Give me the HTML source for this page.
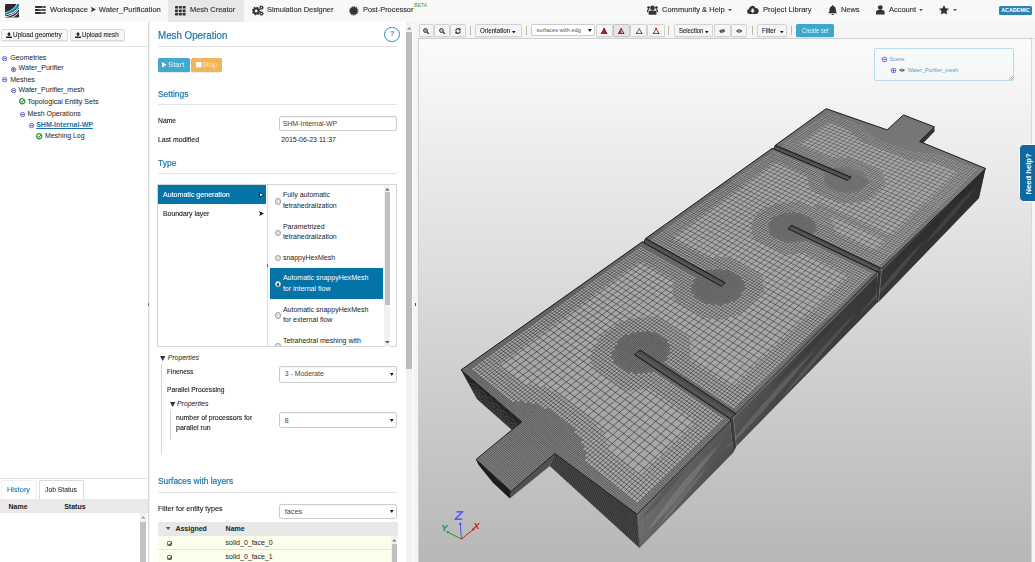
<!DOCTYPE html><html><head><meta charset="utf-8"><title>Mesh Creator</title><style>
html,body{margin:0;padding:0}body{width:1035px;height:562px;overflow:hidden;position:relative;background:#fff;font-family:"Liberation Sans",sans-serif;}
body>div,body>span,body>svg{position:absolute;display:block}svg{overflow:visible}
</style></head><body>
<div style="left:0.00px;top:0.00px;width:1035.00px;height:21.60px;background:#f8f8f8;border-bottom:1px solid #dedede;"></div>
<div style="left:168.20px;top:0.00px;width:75.40px;height:21.50px;background:#e7e7e7;"></div>
<svg style="left:5.10px;top:3.60px;" width="14.00" height="13.50" viewBox="0 0 14 13.5"><rect x="0" y="0" width="14" height="13.5" rx="1.2" fill="#2a2a2c"/>
<path d="M0 8.4 C5 7.2 9.4 4.2 11.6 0 L14 0 L14 3.4 C11 8.2 5.6 10.6 0 11.4 Z" fill="#fff"/>
<path d="M0 8.9 C5.2 7.8 10 4.6 12.4 0 L14 0 L14 2.6 C10.8 7.6 5.4 10 0 10.9 Z" fill="#1b7fbd"/>
<path d="M0 12.3 C6 11.4 11 8.6 14 4.4 L14 5.4 C11.2 9.4 6.4 12 1.4 13 L0 13 Z" fill="#fff"/>
<path d="M4.6 13.5 C8.6 12.4 11.8 10.4 14 7.4 L14 8.4 C12.2 10.8 10 12.4 7.4 13.5 Z" fill="#e8e8e8"/></svg>
<svg style="left:35.30px;top:5.60px;" width="10.60" height="8.00" viewBox="0 0 10.6 8"><g fill="#2e2e2e"><rect x="0" y="0" width="10.6" height="2.1" rx=".4"/><rect x="0" y="2.95" width="10.6" height="2.1" rx=".4"/><rect x="0" y="5.9" width="10.6" height="2.1" rx=".4"/></g>
<g fill="#bbb"><rect x="6.4" y=".65" width="3" height=".8"/><rect x="4.4" y="3.6" width="5" height=".8"/><rect x="5.6" y="6.55" width="3.8" height=".8"/></g></svg>
<span style="left:49.60px;top:5.14px;font-size:8.09px;line-height:10.52px;color:#333;white-space:nowrap;transform:scaleX(0.944);transform-origin:0 50%;-webkit-text-stroke:0.15px #333;">Workspace ➤ Water_Purification</span>
<svg style="left:175.30px;top:5.50px;" width="10.60" height="9.60" viewBox="0 0 10.6 9.6"><g fill="#333"><rect x="0.0" y="0.0" width="3" height="2.6" rx=".4"/><rect x="3.8" y="0.0" width="3" height="2.6" rx=".4"/><rect x="7.6" y="0.0" width="3" height="2.6" rx=".4"/><rect x="0.0" y="3.4" width="3" height="2.6" rx=".4"/><rect x="3.8" y="3.4" width="3" height="2.6" rx=".4"/><rect x="7.6" y="3.4" width="3" height="2.6" rx=".4"/><rect x="0.0" y="6.8" width="3" height="2.6" rx=".4"/><rect x="3.8" y="6.8" width="3" height="2.6" rx=".4"/><rect x="7.6" y="6.8" width="3" height="2.6" rx=".4"/></g></svg>
<span style="left:190.30px;top:5.14px;font-size:8.09px;line-height:10.52px;color:#333;white-space:nowrap;transform:scaleX(0.924);transform-origin:0 50%;-webkit-text-stroke:0.15px #333;">Mesh Creator</span>
<svg style="left:252.00px;top:5.00px;" width="11.50" height="10.80" viewBox="0 0 11.5 10.8"><g fill="none" stroke="#333"><circle cx="4.2" cy="6" r="2.4" stroke-width="2"/><circle cx="4.2" cy="6" r="3.7" stroke-width="1.3" stroke-dasharray="1.5 1.4"/>
<circle cx="9.4" cy="2.6" r="1.2" stroke-width="1.1"/><circle cx="9.4" cy="2.6" r="2" stroke-width=".8" stroke-dasharray=".9 .9"/>
<circle cx="9.4" cy="8.6" r="1.2" stroke-width="1.1"/><circle cx="9.4" cy="8.6" r="2" stroke-width=".8" stroke-dasharray=".9 .9"/></g></svg>
<span style="left:266.80px;top:5.14px;font-size:8.09px;line-height:10.52px;color:#333;white-space:nowrap;transform:scaleX(0.919);transform-origin:0 50%;-webkit-text-stroke:0.15px #333;">Simulation Designer</span>
<svg style="left:349.20px;top:5.60px;" width="9.60" height="9.60" viewBox="0 0 9.6 9.6"><circle cx="4.8" cy="4.8" r="3.9" fill="#333"/><circle cx="4.8" cy="4.8" r="4.3" fill="none" stroke="#333" stroke-width="1" stroke-dasharray="1.2 1"/></svg>
<span style="left:362.50px;top:5.14px;font-size:8.09px;line-height:10.52px;color:#333;white-space:nowrap;transform:scaleX(0.913);transform-origin:0 50%;-webkit-text-stroke:0.15px #333;">Post-Processor</span>
<span style="left:414.30px;top:1.95px;font-size:5.00px;line-height:6.51px;color:#3c9a3c;white-space:nowrap;">BETA</span>
<svg style="left:646.60px;top:5.00px;" width="11.00" height="9.80" viewBox="0 0 11 9.8"><g fill="#333"><circle cx="5.5" cy="2.9" r="2.3"/><path d="M1.6 9.8 L1.6 7.4 Q1.6 5.4 3.6 5.4 L7.4 5.4 Q9.4 5.4 9.4 7.4 L9.4 9.8 Z"/>
<circle cx="1.6" cy="2.6" r="1.4"/><circle cx="9.4" cy="2.6" r="1.4"/><path d="M0 7.2 L0 5.6 Q0 4.2 1.4 4.2 L2.6 4.4 Q1 5.4 1.2 7.2Z"/><path d="M11 7.2 L11 5.6 Q11 4.2 9.6 4.2 L8.4 4.4 Q10 5.4 9.8 7.2Z"/></g></svg>
<span style="left:661.60px;top:5.14px;font-size:8.09px;line-height:10.52px;color:#333;white-space:nowrap;transform:scaleX(0.931);transform-origin:0 50%;-webkit-text-stroke:0.15px #333;">Community &amp; Help</span>
<svg style="left:727.60px;top:9.40px;" width="4.00" height="2.40" viewBox="0 0 4 2.4"><path d="M0 0 L4 0 L2 2.2Z" fill="#555"/></svg>
<svg style="left:747.40px;top:5.20px;" width="11.20" height="9.00" viewBox="0 0 11.2 9"><path d="M2.6 9 A2.6 2.6 0 0 1 1.9 3.9 A3.4 3.4 0 0 1 8.4 2.9 A3 3 0 0 1 8.8 9 Z" fill="#333"/><path d="M4.7 3.6 L6.5 3.6 L6.5 5.6 L8 5.6 L5.6 8 L3.2 5.6 L4.7 5.6Z" fill="#f8f8f8"/></svg>
<span style="left:762.70px;top:5.14px;font-size:8.09px;line-height:10.52px;color:#333;white-space:nowrap;transform:scaleX(0.934);transform-origin:0 50%;-webkit-text-stroke:0.15px #333;">Project Library</span>
<svg style="left:827.80px;top:4.80px;" width="9.40" height="10.20" viewBox="0 0 9.4 10.2"><path d="M4.7 0.2 C5.3 0.2 5.5 .7 5.4 1.1 C7.4 1.7 7.9 3.4 7.9 5 C7.9 6.8 8.6 7.6 9.4 8.3 L0 8.3 C.8 7.6 1.5 6.8 1.5 5 C1.5 3.4 2 1.7 4 1.1 C3.9 .7 4.1 .2 4.7 .2Z M3.5 8.9 L5.9 8.9 A1.2 1.2 0 0 1 3.5 8.9Z" fill="#333"/></svg>
<span style="left:841.40px;top:5.14px;font-size:8.09px;line-height:10.52px;color:#333;white-space:nowrap;transform:scaleX(0.915);transform-origin:0 50%;-webkit-text-stroke:0.15px #333;">News</span>
<svg style="left:876.00px;top:5.20px;" width="8.60" height="9.40" viewBox="0 0 8.6 9.4"><circle cx="4.3" cy="2.6" r="2.4" fill="#333"/><path d="M0 9.4 L0 7.6 Q0 5 2.4 5 L6.2 5 Q8.6 5 8.6 7.6 L8.6 9.4Z" fill="#333"/></svg>
<span style="left:888.50px;top:5.14px;font-size:8.09px;line-height:10.52px;color:#333;white-space:nowrap;transform:scaleX(0.924);transform-origin:0 50%;-webkit-text-stroke:0.15px #333;">Account</span>
<svg style="left:918.80px;top:9.40px;" width="4.00" height="2.40" viewBox="0 0 4 2.4"><path d="M0 0 L4 0 L2 2.2Z" fill="#555"/></svg>
<svg style="left:938.60px;top:4.90px;" width="10.00" height="9.60" viewBox="0 0 10 9.6"><path d="M5 0 L6.5 3.2 L10 3.7 L7.5 6.1 L8.1 9.6 L5 7.9 L1.9 9.6 L2.5 6.1 L0 3.7 L3.5 3.2Z" fill="#333"/></svg>
<svg style="left:952.60px;top:9.40px;" width="4.00" height="2.40" viewBox="0 0 4 2.4"><path d="M0 0 L4 0 L2 2.2Z" fill="#555"/></svg>
<div style="left:999.00px;top:5.80px;width:33.00px;height:8.80px;background:#2c83b4;border-radius:1.5px;"></div>
<span style="left:1001.20px;top:6.83px;font-size:5.34px;line-height:6.95px;color:#fff;white-space:nowrap;font-weight:bold;">ACADEMIC</span>
<div style="left:0.00px;top:22.00px;width:148.00px;height:540.00px;background:#fff;"></div>
<div style="left:148.00px;top:22.00px;width:1.00px;height:540.00px;background:#d9d9d9;"></div>
<div style="left:149.00px;top:22.00px;width:1.20px;height:540.00px;background:#f3f3f3;"></div>
<div style="left:0.60px;top:28.50px;width:67.00px;height:12.80px;background:#f7f7f7;border:1px solid #d8d8d8;border-radius:1.6px;box-sizing:border-box;box-shadow:0 .6px .6px rgba(0,0,0,.12);"></div>
<div style="left:69.60px;top:28.50px;width:55.00px;height:12.80px;background:#f7f7f7;border:1px solid #d8d8d8;border-radius:1.6px;box-sizing:border-box;box-shadow:0 .6px .6px rgba(0,0,0,.12);"></div>
<svg style="left:6.00px;top:31.70px;" width="6.00" height="6.00" viewBox="0 0 6 6"><path d="M3 0 L5.2 2.4 L3.8 2.4 L3.8 4 L2.2 4 L2.2 2.4 L.8 2.4Z M0 4.4 L6 4.4 L6 6 L0 6Z" fill="#222"/></svg>
<span style="left:13.20px;top:30.25px;font-size:7.00px;line-height:9.10px;color:#222;white-space:nowrap;transform:scaleX(0.915);transform-origin:0 50%;-webkit-text-stroke:0.1px #222;">Upload geometry</span>
<svg style="left:75.30px;top:31.70px;" width="6.00" height="6.00" viewBox="0 0 6 6"><path d="M3 0 L5.2 2.4 L3.8 2.4 L3.8 4 L2.2 4 L2.2 2.4 L.8 2.4Z M0 4.4 L6 4.4 L6 6 L0 6Z" fill="#222"/></svg>
<span style="left:82.40px;top:30.25px;font-size:7.00px;line-height:9.10px;color:#222;white-space:nowrap;transform:scaleX(0.887);transform-origin:0 50%;-webkit-text-stroke:0.1px #222;">Upload mesh</span>
<div style="left:0.00px;top:46.00px;width:148.00px;height:1.00px;background:#e2e2e2;"></div>
<svg style="left:2.40px;top:55.80px;" width="5.20" height="5.20" viewBox="0 0 5.2 5.2"><circle cx="2.6" cy="2.6" r="2.2" fill="#eef" stroke="#3a3ac0" stroke-width=".7"/><path d="M1.2 2.6 L4 2.6" stroke="#3a3ac0" stroke-width=".8"/></svg>
<span style="left:10.20px;top:53.05px;font-size:7.00px;line-height:9.10px;color:#222;white-space:nowrap;">Geometries</span>
<svg style="left:11.20px;top:66.60px;" width="5.20" height="5.20" viewBox="0 0 5.2 5.2"><circle cx="2.6" cy="2.6" r="2.2" fill="#eef" stroke="#3a3ac0" stroke-width=".7"/><path d="M1.2 2.6 L4 2.6 M2.6 1.2 L2.6 4" stroke="#3a3ac0" stroke-width=".8"/></svg>
<span style="left:18.60px;top:63.79px;font-size:7.10px;line-height:9.23px;color:#222;white-space:nowrap;">Water_Purifier</span>
<svg style="left:2.40px;top:77.40px;" width="5.20" height="5.20" viewBox="0 0 5.2 5.2"><circle cx="2.6" cy="2.6" r="2.2" fill="#eef" stroke="#3a3ac0" stroke-width=".7"/><path d="M1.2 2.6 L4 2.6" stroke="#3a3ac0" stroke-width=".8"/></svg>
<span style="left:10.20px;top:74.61px;font-size:7.05px;line-height:9.17px;color:#222;white-space:nowrap;">Meshes</span>
<svg style="left:11.20px;top:88.10px;" width="5.20" height="5.20" viewBox="0 0 5.2 5.2"><circle cx="2.6" cy="2.6" r="2.2" fill="#eef" stroke="#3a3ac0" stroke-width=".7"/><path d="M1.2 2.6 L4 2.6" stroke="#3a3ac0" stroke-width=".8"/></svg>
<span style="left:18.60px;top:85.31px;font-size:7.05px;line-height:9.17px;color:#222;white-space:nowrap;">Water_Purifier_mesh</span>
<svg style="left:19.20px;top:98.40px;" width="6.40" height="6.40" viewBox="0 0 6.4 6.4"><circle cx="3.2" cy="3.2" r="2.6" fill="#fff" stroke="#1f9a2f" stroke-width="1.2"/><path d="M1.7 3.2 L2.9 4.4 L4.8 2.1" stroke="#1f7a25" stroke-width="1" fill="none"/></svg>
<span style="left:27.40px;top:97.11px;font-size:7.07px;line-height:9.19px;color:#222;white-space:nowrap;">Topological Entity Sets</span>
<svg style="left:20.00px;top:111.60px;" width="5.20" height="5.20" viewBox="0 0 5.2 5.2"><circle cx="2.6" cy="2.6" r="2.2" fill="#eef" stroke="#3a3ac0" stroke-width=".7"/><path d="M1.2 2.6 L4 2.6" stroke="#3a3ac0" stroke-width=".8"/></svg>
<span style="left:27.40px;top:109.03px;font-size:7.03px;line-height:9.13px;color:#222;white-space:nowrap;">Mesh Operations</span>
<svg style="left:28.60px;top:122.70px;" width="5.20" height="5.20" viewBox="0 0 5.2 5.2"><circle cx="2.6" cy="2.6" r="2.2" fill="#eef" stroke="#3a3ac0" stroke-width=".7"/><path d="M1.2 2.6 L4 2.6" stroke="#3a3ac0" stroke-width=".8"/></svg>
<span style="left:36.20px;top:120.05px;font-size:7.00px;line-height:9.10px;color:#1673ad;white-space:nowrap;font-weight:bold;text-decoration:underline;">SHM-Internal-WP</span>
<svg style="left:36.40px;top:133.10px;" width="6.40" height="6.40" viewBox="0 0 6.4 6.4"><circle cx="3.2" cy="3.2" r="2.6" fill="#fff" stroke="#1f9a2f" stroke-width="1.2"/><path d="M1.7 3.2 L2.9 4.4 L4.8 2.1" stroke="#1f7a25" stroke-width="1" fill="none"/></svg>
<span style="left:45.00px;top:131.90px;font-size:6.92px;line-height:8.99px;color:#222;white-space:nowrap;">Meshing Log</span>
<div style="left:0.00px;top:477.80px;width:148.00px;height:1.00px;background:#e2e2e2;"></div>
<div style="left:0.60px;top:479.50px;width:36.00px;height:19.50px;border:1px solid #efefef;border-bottom:none;box-sizing:border-box;border-radius:2px 2px 0 0;"></div>
<div style="left:38.50px;top:479.50px;width:45.00px;height:19.50px;border:1px solid #dcdcdc;border-bottom:none;box-sizing:border-box;border-radius:2px 2px 0 0;background:#fff;"></div>
<span style="left:6.90px;top:485.09px;font-size:7.55px;line-height:9.81px;color:#1b7bb3;white-space:nowrap;transform:scaleX(0.983);transform-origin:0 50%;-webkit-text-stroke:0.1px #1b7bb3;">History</span>
<span style="left:45.00px;top:485.09px;font-size:7.55px;line-height:9.81px;color:#333;white-space:nowrap;transform:scaleX(0.897);transform-origin:0 50%;-webkit-text-stroke:0.1px #333;">Job Status</span>
<div style="left:0.00px;top:498.80px;width:148.00px;height:14.20px;background:#e9e9e9;"></div>
<span style="left:8.50px;top:501.85px;font-size:7.00px;line-height:9.10px;color:#222;white-space:nowrap;font-weight:bold;">Name</span>
<span style="left:64.20px;top:501.85px;font-size:7.00px;line-height:9.10px;color:#222;white-space:nowrap;font-weight:bold;">Status</span>
<div style="left:139.80px;top:513.00px;width:6.20px;height:49.00px;background:#f1f1f1;"></div>
<svg style="left:140.60px;top:516.40px;" width="4.60" height="2.60" viewBox="0 0 4.6 2.6"><path d="M0 2.6 L2.3 0 L4.6 2.6Z" fill="#a0a0a0"/></svg>
<div style="left:140.20px;top:521.60px;width:5.40px;height:41.00px;background:#c1c1c1;"></div>
<div style="left:150.20px;top:22.00px;width:255.50px;height:540.00px;background:#fff;"></div>
<span style="left:157.50px;top:28.54px;font-size:10.24px;line-height:13.31px;color:#1a76ab;white-space:nowrap;transform:scaleX(0.954);transform-origin:0 50%;-webkit-text-stroke:0.2px #1a76ab;">Mesh Operation</span>
<div style="left:157.50px;top:45.70px;width:239.90px;height:1.00px;background:#e3e3e3;"></div>
<div style="left:384.30px;top:26.70px;width:15.40px;height:15.40px;border:1px solid #2a8fbd;border-radius:50%;box-sizing:border-box;background:#fff;"></div>
<span style="left:389.90px;top:30.03px;font-size:6.88px;line-height:8.94px;color:#2a8fbd;white-space:nowrap;font-weight:bold;">?</span>
<div style="left:157.50px;top:57.60px;width:32.00px;height:14.00px;background:#41a9cd;border-radius:1.6px;box-shadow:0 .6px .5px rgba(0,0,0,.2);"></div>
<svg style="left:162.20px;top:61.70px;" width="4.60" height="5.60" viewBox="0 0 4.6 5.6"><path d="M0 0 L4.6 2.8 L0 5.6Z" fill="#fff"/></svg>
<span style="left:167.80px;top:59.69px;font-size:7.55px;line-height:9.81px;color:#e6f4fa;white-space:nowrap;transform:scaleX(1.029);transform-origin:0 50%;">Start</span>
<div style="left:190.70px;top:57.60px;width:31.30px;height:14.00px;background:#f4b45a;border-radius:1.6px;box-shadow:0 .6px .5px rgba(0,0,0,.15);"></div>
<svg style="left:195.60px;top:61.80px;" width="5.40" height="5.40" viewBox="0 0 5.4 5.4"><rect width="5.4" height="5.4" fill="#fff"/></svg>
<span style="left:202.00px;top:59.69px;font-size:7.55px;line-height:9.81px;color:#fce5c2;white-space:nowrap;transform:scaleX(0.966);transform-origin:0 50%;">Stop</span>
<span style="left:157.50px;top:88.70px;font-size:8.62px;line-height:11.21px;color:#1a76ab;white-space:nowrap;transform:scaleX(0.979);transform-origin:0 50%;-webkit-text-stroke:0.2px #1a76ab;">Settings</span>
<div style="left:157.50px;top:103.60px;width:239.90px;height:1.00px;background:#e3e3e3;"></div>
<span style="left:157.50px;top:116.49px;font-size:7.55px;line-height:9.81px;color:#222;white-space:nowrap;transform:scaleX(0.899);transform-origin:0 50%;-webkit-text-stroke:0.12px #222;">Name</span>
<div style="left:278.60px;top:116.30px;width:118.90px;height:15.10px;border:1px solid #ccc;border-radius:2px;box-sizing:border-box;background:#fff;box-shadow:inset 0 .5px .5px rgba(0,0,0,.08);"></div>
<span style="left:282.70px;top:119.48px;font-size:6.96px;line-height:9.04px;color:#444;white-space:nowrap;">SHM-Internal-WP</span>
<span style="left:157.50px;top:134.79px;font-size:7.55px;line-height:9.81px;color:#222;white-space:nowrap;transform:scaleX(0.913);transform-origin:0 50%;-webkit-text-stroke:0.12px #222;">Last modified</span>
<span style="left:281.20px;top:134.95px;font-size:7.01px;line-height:9.11px;color:#222;white-space:nowrap;">2015-06-23 11:37</span>
<span style="left:157.50px;top:157.60px;font-size:8.62px;line-height:11.21px;color:#1a76ab;white-space:nowrap;transform:scaleX(0.985);transform-origin:0 50%;-webkit-text-stroke:0.2px #1a76ab;">Type</span>
<div style="left:157.50px;top:172.90px;width:239.90px;height:1.00px;background:#e3e3e3;"></div>
<div style="left:157.20px;top:184.40px;width:239.60px;height:162.60px;border:1px solid #d4d4d4;box-sizing:border-box;background:#fff;"></div>
<div style="left:266.50px;top:185.00px;width:1.00px;height:161.50px;background:#dcdcdc;"></div>
<div style="left:157.80px;top:185.00px;width:108.40px;height:18.90px;background:#0473a8;"></div>
<span style="left:162.50px;top:189.79px;font-size:7.55px;line-height:9.81px;color:#fff;white-space:nowrap;transform:scaleX(0.936);transform-origin:0 50%;-webkit-text-stroke:0.12px #fff;">Automatic generation</span>
<svg style="left:258.80px;top:191.80px;" width="5.40" height="5.60" viewBox="0 0 5.4 5.6"><path d="M.5 .5 L4.9 2.8 L.5 5.1Z" fill="#fff" stroke="#111" stroke-width=".8"/></svg>
<span style="left:162.50px;top:208.99px;font-size:7.55px;line-height:9.81px;color:#222;white-space:nowrap;transform:scaleX(0.912);transform-origin:0 50%;-webkit-text-stroke:0.12px #222;">Boundary layer</span>
<svg style="left:259.00px;top:211.40px;" width="5.00" height="5.00" viewBox="0 0 5 5"><path d="M0 0 L5 2.5 L0 5 L1.2 2.5Z" fill="#111"/></svg>
<div style="left:269.80px;top:267.70px;width:113.40px;height:31.10px;background:#0473a8;"></div>
<div style="left:274.90px;top:198.20px;width:6.40px;height:6.40px;border-radius:50%;background:#e4e4e4;border:.8px solid #a0a0a0;box-sizing:border-box;"></div>
<span style="left:282.90px;top:190.43px;font-size:7.03px;line-height:9.14px;color:#222;white-space:nowrap;">Fully automatic</span>
<span style="left:282.90px;top:200.83px;font-size:7.03px;line-height:9.14px;color:#222;white-space:nowrap;">tetrahedralization</span>
<div style="left:274.90px;top:229.50px;width:6.40px;height:6.40px;border-radius:50%;background:#e4e4e4;border:.8px solid #a0a0a0;box-sizing:border-box;"></div>
<span style="left:282.90px;top:221.73px;font-size:7.03px;line-height:9.14px;color:#222;white-space:nowrap;">Parametrized</span>
<span style="left:282.90px;top:232.23px;font-size:7.03px;line-height:9.14px;color:#222;white-space:nowrap;">tetrahedralization</span>
<div style="left:274.90px;top:255.00px;width:6.40px;height:6.40px;border-radius:50%;background:#e4e4e4;border:.8px solid #a0a0a0;box-sizing:border-box;"></div>
<span style="left:282.90px;top:252.93px;font-size:7.03px;line-height:9.14px;color:#222;white-space:nowrap;">snappyHexMesh</span>
<div style="left:274.90px;top:281.10px;width:6.40px;height:6.40px;border-radius:50%;background:#fff;border:.6px solid #bbb;box-sizing:border-box;"></div>
<div style="left:276.90px;top:283.00px;width:2.60px;height:2.60px;border-radius:50%;background:#333;"></div>
<span style="left:282.90px;top:273.03px;font-size:7.03px;line-height:9.14px;color:#fff;white-space:nowrap;">Automatic snappyHexMesh</span>
<span style="left:282.90px;top:283.93px;font-size:7.03px;line-height:9.14px;color:#fff;white-space:nowrap;">for internal flow</span>
<div style="left:274.90px;top:312.40px;width:6.40px;height:6.40px;border-radius:50%;background:#e4e4e4;border:.8px solid #a0a0a0;box-sizing:border-box;"></div>
<span style="left:282.90px;top:304.63px;font-size:7.03px;line-height:9.14px;color:#222;white-space:nowrap;">Automatic snappyHexMesh</span>
<span style="left:282.90px;top:315.03px;font-size:7.03px;line-height:9.14px;color:#222;white-space:nowrap;">for external flow</span>
<div style="left:275.30px;top:343.00px;width:5.80px;height:3.40px;border-radius:3px 3px 0 0;background:#e9e9e9;border:.7px solid #a9a9a9;border-bottom:none;box-sizing:border-box;"></div>
<span style="left:282.90px;top:335.53px;font-size:7.03px;line-height:9.14px;color:#222;white-space:nowrap;">Tetrahedral meshing with</span>
<div style="left:384.20px;top:185.00px;width:6.20px;height:161.50px;background:#f1f1f1;"></div>
<svg style="left:385.00px;top:187.80px;" width="4.60" height="2.60" viewBox="0 0 4.6 2.6"><path d="M0 2.6 L2.3 0 L4.6 2.6Z" fill="#606060"/></svg>
<div style="left:384.60px;top:192.30px;width:5.40px;height:113.20px;background:#c1c1c1;"></div>
<svg style="left:385.00px;top:341.20px;" width="4.60" height="2.60" viewBox="0 0 4.6 2.6"><path d="M0 0 L2.3 2.6 L4.6 0Z" fill="#505050"/></svg>
<div style="left:266.50px;top:264.20px;width:1.00px;height:3.00px;background:#666;"></div>
<svg style="left:159.80px;top:355.70px;" width="5.40" height="5.00" viewBox="0 0 5.4 5"><path d="M0 0 L5.4 0 L2.7 5Z" fill="#333"/></svg>
<span style="left:167.80px;top:353.66px;font-size:6.82px;line-height:8.87px;color:#222;white-space:nowrap;font-style:italic;">Properties</span>
<div style="left:161.10px;top:363.70px;width:1.00px;height:91.30px;background:#d6d6d6;"></div>
<span style="left:166.90px;top:367.09px;font-size:7.55px;line-height:9.81px;color:#222;white-space:nowrap;transform:scaleX(0.858);transform-origin:0 50%;-webkit-text-stroke:0.12px #222;">Fineness</span>
<span style="left:166.90px;top:385.49px;font-size:7.55px;line-height:9.81px;color:#222;white-space:nowrap;transform:scaleX(0.890);transform-origin:0 50%;-webkit-text-stroke:0.12px #222;">Parallel Processing</span>
<svg style="left:169.60px;top:401.60px;" width="5.40" height="5.00" viewBox="0 0 5.4 5"><path d="M0 0 L5.4 0 L2.7 5Z" fill="#333"/></svg>
<span style="left:177.00px;top:399.52px;font-size:6.89px;line-height:8.96px;color:#222;white-space:nowrap;font-style:italic;">Properties</span>
<div style="left:170.30px;top:410.00px;width:1.00px;height:30.20px;background:#d6d6d6;"></div>
<span style="left:175.80px;top:412.69px;font-size:7.55px;line-height:9.81px;color:#222;white-space:nowrap;transform:scaleX(0.908);transform-origin:0 50%;-webkit-text-stroke:0.12px #222;">number of processors for</span>
<span style="left:175.80px;top:423.39px;font-size:7.55px;line-height:9.81px;color:#222;white-space:nowrap;transform:scaleX(0.929);transform-origin:0 50%;-webkit-text-stroke:0.12px #222;">parallel run</span>
<div style="left:278.50px;top:366.00px;width:118.80px;height:16.70px;border:1px solid #ccc;border-radius:2.2px;box-sizing:border-box;background:#fff;box-shadow:inset 0 .5px .5px rgba(0,0,0,.06);"></div>
<span style="left:284.80px;top:370.27px;font-size:6.90px;line-height:8.97px;color:#444;white-space:nowrap;">3 - Moderate</span>
<svg style="left:389.90px;top:372.95px;" width="3.60" height="3.00" viewBox="0 0 3.6 3"><path d="M0 0 L3.6 0 L1.8 3Z" fill="#111"/></svg>
<div style="left:278.50px;top:412.00px;width:118.80px;height:16.40px;border:1px solid #ccc;border-radius:2.2px;box-sizing:border-box;background:#fff;box-shadow:inset 0 .5px .5px rgba(0,0,0,.06);"></div>
<span style="left:284.80px;top:416.04px;font-size:7.01px;line-height:9.12px;color:#444;white-space:nowrap;">8</span>
<svg style="left:389.90px;top:418.80px;" width="3.60" height="3.00" viewBox="0 0 3.6 3"><path d="M0 0 L3.6 0 L1.8 3Z" fill="#111"/></svg>
<span style="left:157.50px;top:475.60px;font-size:8.62px;line-height:11.21px;color:#1a76ab;white-space:nowrap;transform:scaleX(0.975);transform-origin:0 50%;-webkit-text-stroke:0.2px #1a76ab;">Surfaces with layers</span>
<div style="left:157.50px;top:492.10px;width:239.90px;height:1.00px;background:#e3e3e3;"></div>
<span style="left:157.50px;top:503.89px;font-size:7.55px;line-height:9.81px;color:#222;white-space:nowrap;transform:scaleX(0.949);transform-origin:0 50%;-webkit-text-stroke:0.12px #222;">Filter for entity types</span>
<div style="left:278.50px;top:503.50px;width:118.80px;height:15.90px;border:1px solid #ccc;border-radius:2.2px;box-sizing:border-box;background:#fff;box-shadow:inset 0 .5px .5px rgba(0,0,0,.06);"></div>
<span style="left:284.80px;top:507.17px;font-size:7.20px;line-height:9.36px;color:#444;white-space:nowrap;">faces</span>
<svg style="left:389.90px;top:510.05px;" width="3.60" height="3.00" viewBox="0 0 3.6 3"><path d="M0 0 L3.6 0 L1.8 3Z" fill="#111"/></svg>
<div style="left:157.50px;top:522.10px;width:240.20px;height:13.80px;background:#e8e8e8;border-radius:2px 2px 0 0;"></div>
<svg style="left:166.40px;top:527.20px;" width="4.40" height="3.00" viewBox="0 0 4.4 3"><path d="M0 0 L4.4 0 L2.2 3Z" fill="#555"/></svg>
<span style="left:175.40px;top:524.15px;font-size:7.00px;line-height:9.10px;color:#222;white-space:nowrap;font-weight:bold;">Assigned</span>
<span style="left:225.60px;top:524.15px;font-size:7.00px;line-height:9.10px;color:#222;white-space:nowrap;font-weight:bold;">Name</span>
<div style="left:157.50px;top:535.90px;width:233.40px;height:13.40px;background:#fdfdec;"></div>
<div style="left:157.50px;top:549.30px;width:233.40px;height:0.60px;background:#e6e6d8;"></div>
<div style="left:157.50px;top:549.90px;width:233.40px;height:12.10px;background:#fdfdec;"></div>
<div style="left:166.80px;top:541.10px;width:5.40px;height:5.40px;border:.7px solid #777;border-radius:1px;box-sizing:border-box;background:#f4f4f4;"></div>
<svg style="left:167.60px;top:541.60px;" width="4.00" height="4.00" viewBox="0 0 4 4"><path d="M.5 2.1 L1.6 3.3 L3.6 .5" stroke="#111" stroke-width="1" fill="none"/></svg>
<span style="left:225.60px;top:538.05px;font-size:7.00px;line-height:9.10px;color:#222;white-space:nowrap;">solid_0_face_0</span>
<div style="left:166.80px;top:555.00px;width:5.40px;height:5.40px;border:.7px solid #777;border-radius:1px;box-sizing:border-box;background:#f4f4f4;"></div>
<svg style="left:167.60px;top:555.50px;" width="4.00" height="4.00" viewBox="0 0 4 4"><path d="M.5 2.1 L1.6 3.3 L3.6 .5" stroke="#111" stroke-width="1" fill="none"/></svg>
<span style="left:225.60px;top:551.75px;font-size:7.00px;line-height:9.10px;color:#222;white-space:nowrap;">solid_0_face_1</span>
<div style="left:391.00px;top:535.90px;width:6.40px;height:26.10px;background:#f1f1f1;"></div>
<svg style="left:391.90px;top:538.80px;" width="4.60" height="2.60" viewBox="0 0 4.6 2.6"><path d="M0 2.6 L2.3 0 L4.6 2.6Z" fill="#808080"/></svg>
<div style="left:391.50px;top:543.80px;width:5.40px;height:19.00px;background:#c1c1c1;"></div>
<div style="left:405.70px;top:22.00px;width:6.80px;height:540.00px;background:#f1f1f1;"></div>
<svg style="left:406.80px;top:27.40px;" width="4.60" height="2.60" viewBox="0 0 4.6 2.6"><path d="M0 2.6 L2.3 0 L4.6 2.6Z" fill="#909090"/></svg>
<div style="left:406.30px;top:32.00px;width:5.70px;height:337.30px;background:#bcbcbc;"></div>
<div style="left:412.50px;top:22.00px;width:5.50px;height:540.00px;background:#f4f4f4;"></div>
<div style="left:414.60px;top:303.40px;width:0.90px;height:3.00px;background:#555;"></div>
<div style="left:147.60px;top:303.40px;width:0.90px;height:3.00px;background:#777;"></div>
<div style="left:418.00px;top:22.00px;width:617.00px;height:540.00px;background:#f5f5f5;"></div>
<div style="left:418.60px;top:24.40px;width:15.80px;height:12.30px;background:#f5f5f5;border:1px solid #d2d2d2;box-sizing:border-box;border-radius:1.5px;box-shadow:0 .6px .5px rgba(0,0,0,.1);"></div>
<div style="left:434.30px;top:24.40px;width:16.20px;height:12.30px;background:#f5f5f5;border:1px solid #d2d2d2;box-sizing:border-box;border-radius:1.5px;box-shadow:0 .6px .5px rgba(0,0,0,.1);"></div>
<div style="left:450.40px;top:24.40px;width:16.00px;height:12.30px;background:#f5f5f5;border:1px solid #d2d2d2;box-sizing:border-box;border-radius:1.5px;box-shadow:0 .6px .5px rgba(0,0,0,.1);"></div>
<svg style="left:423.20px;top:27.60px;" width="6.00" height="6.00" viewBox="0 0 6 6"><circle cx="2.5" cy="2.5" r="1.9" fill="none" stroke="#222" stroke-width="1"/><path d="M3.9 3.9 L5.8 5.8" stroke="#222" stroke-width="1.2"/><path d="M1.5 2.5 L3.5 2.5 M2.5 1.5 L2.5 3.5" stroke="#222" stroke-width=".5"/></svg>
<svg style="left:439.20px;top:27.60px;" width="6.00" height="6.00" viewBox="0 0 6 6"><circle cx="2.5" cy="2.5" r="1.9" fill="none" stroke="#222" stroke-width="1"/><path d="M3.9 3.9 L5.8 5.8" stroke="#222" stroke-width="1.2"/><path d="M1.5 2.5 L3.5 2.5" stroke="#222" stroke-width=".5"/></svg>
<svg style="left:455.30px;top:27.50px;" width="6.00" height="6.00" viewBox="0 0 6 6"><path d="M.7 2.6 A2.4 2.4 0 0 1 5 1.6 M5.3 3.4 A2.4 2.4 0 0 1 1 4.4" fill="none" stroke="#222" stroke-width="1.1"/><path d="M5.6 .3 L5.6 2.4 L3.6 2.4Z M.4 5.7 L.4 3.6 L2.4 3.6Z" fill="#222"/></svg>
<div style="left:470.10px;top:26.00px;width:1.00px;height:8.60px;background:#c9b79a;"></div>
<div style="left:475.00px;top:24.40px;width:46.60px;height:12.30px;background:#f5f5f5;border:1px solid #d2d2d2;box-sizing:border-box;border-radius:1.5px;box-shadow:0 .6px .5px rgba(0,0,0,.1);"></div>
<span style="left:480.40px;top:26.69px;font-size:6.47px;line-height:8.41px;color:#222;white-space:nowrap;transform:scaleX(0.954);transform-origin:0 50%;-webkit-text-stroke:0.1px #222;">Orientation</span>
<svg style="left:512.20px;top:30.60px;" width="3.60" height="2.20" viewBox="0 0 3.6 2.2"><path d="M0 0 L3.6 0 L1.8 2.2Z" fill="#111"/></svg>
<div style="left:526.00px;top:26.00px;width:1.00px;height:8.60px;background:#c9b79a;"></div>
<div style="left:530.50px;top:24.30px;width:64.20px;height:12.20px;border:1px solid #ccc;border-radius:2px;box-sizing:border-box;background:#fff;"></div>
<span style="left:536.40px;top:27.07px;font-size:5.73px;line-height:7.45px;color:#555;white-space:nowrap;overflow:hidden;">surfaces with edg</span>
<svg style="left:587.60px;top:29.20px;" width="3.80" height="3.00" viewBox="0 0 3.8 3"><path d="M0 0 L3.8 0 L1.9 3Z" fill="#111"/></svg>
<div style="left:596.40px;top:24.40px;width:17.00px;height:12.30px;background:#f5f5f5;border:1px solid #d2d2d2;box-sizing:border-box;border-radius:1.5px;box-shadow:0 .6px .5px rgba(0,0,0,.1);"></div>
<div style="left:613.20px;top:24.40px;width:17.00px;height:12.30px;background:#e4e4e4;border:1px solid #c4c4c4;box-sizing:border-box;border-radius:1.5px;box-shadow:0 .6px .5px rgba(0,0,0,.1);"></div>
<div style="left:630.00px;top:24.40px;width:17.40px;height:12.30px;background:#f5f5f5;border:1px solid #d2d2d2;box-sizing:border-box;border-radius:1.5px;box-shadow:0 .6px .5px rgba(0,0,0,.1);"></div>
<div style="left:647.20px;top:24.40px;width:17.40px;height:12.30px;background:#f5f5f5;border:1px solid #d2d2d2;box-sizing:border-box;border-radius:1.5px;box-shadow:0 .6px .5px rgba(0,0,0,.1);"></div>
<svg style="left:601.20px;top:28.10px;" width="6.30" height="6.30" viewBox="0 0 7 7"><path d="M3.5 .5 L6.5 6 L.5 6Z" fill="#e01010" stroke="#222" stroke-width=".9"/><circle cx="3.5" cy=".9" r=".8" fill="#333"/><circle cx=".8" cy="6" r=".8" fill="#333"/><circle cx="6.2" cy="6" r=".8" fill="#333"/></svg>
<svg style="left:618.20px;top:28.10px;" width="6.30" height="6.30" viewBox="0 0 7 7"><path d="M3.5 .5 L6.5 6 L.5 6Z" fill="#fff" stroke="#222" stroke-width=".9"/><path d="M3.5 .8 L3.9 6 L1 6Z" fill="#e01010"/><path d="M3.5 .5 L4.2 6" stroke="#58a" stroke-width=".5"/><circle cx="3.5" cy=".9" r=".7" fill="#333"/><circle cx=".8" cy="6" r=".8" fill="#333"/><circle cx="6.2" cy="6" r=".8" fill="#333"/></svg>
<svg style="left:635.60px;top:28.10px;" width="6.30" height="6.30" viewBox="0 0 7 7"><path d="M3.5 .5 L6.5 6 L.5 6Z" fill="#fff" stroke="#333" stroke-width=".9"/><path d="M3.5 .6 L1 5.6" stroke="#d9b38c" stroke-width=".7"/><circle cx=".8" cy="6" r=".8" fill="#333"/><circle cx="6.2" cy="6" r=".8" fill="#333"/></svg>
<svg style="left:652.60px;top:28.10px;" width="6.30" height="6.30" viewBox="0 0 7 7"><path d="M3.5 .9 L6.5 6 L.5 6Z" fill="#fff" stroke="#333" stroke-width=".9"/><circle cx="3.5" cy="1.1" r="1.2" fill="#e01010"/><circle cx=".8" cy="6" r=".8" fill="#333"/><circle cx="6.2" cy="6" r=".8" fill="#333"/></svg>
<div style="left:668.30px;top:26.00px;width:1.00px;height:8.60px;background:#c9b79a;"></div>
<div style="left:673.80px;top:24.40px;width:39.40px;height:12.30px;background:#f5f5f5;border:1px solid #d2d2d2;box-sizing:border-box;border-radius:1.5px;box-shadow:0 .6px .5px rgba(0,0,0,.1);"></div>
<span style="left:678.70px;top:26.69px;font-size:6.47px;line-height:8.41px;color:#222;white-space:nowrap;transform:scaleX(0.913);transform-origin:0 50%;-webkit-text-stroke:0.1px #222;">Selection</span>
<svg style="left:705.20px;top:30.60px;" width="3.60" height="2.20" viewBox="0 0 3.6 2.2"><path d="M0 0 L3.6 0 L1.8 2.2Z" fill="#111"/></svg>
<div style="left:713.60px;top:24.40px;width:17.20px;height:12.30px;background:#f5f5f5;border:1px solid #d2d2d2;box-sizing:border-box;border-radius:1.5px;box-shadow:0 .6px .5px rgba(0,0,0,.1);"></div>
<div style="left:730.60px;top:24.40px;width:16.90px;height:12.30px;background:#f5f5f5;border:1px solid #d2d2d2;box-sizing:border-box;border-radius:1.5px;box-shadow:0 .6px .5px rgba(0,0,0,.1);"></div>
<svg style="left:718.80px;top:28.60px;" width="6.40" height="4.00" viewBox="0 0 6.4 4"><path d="M0 2 Q3.2 -1.4 6.4 2 Q3.2 5.4 0 2Z" fill="#444"/><circle cx="3.2" cy="2" r="1.1" fill="#ddd"/><circle cx="3.2" cy="2" r=".6" fill="#222"/><path d="M1 4 L5.4 0" stroke="#222" stroke-width=".6"/></svg>
<svg style="left:735.80px;top:28.60px;" width="6.40" height="4.00" viewBox="0 0 6.4 4"><path d="M0 2 Q3.2 -1.4 6.4 2 Q3.2 5.4 0 2Z" fill="#444"/><circle cx="3.2" cy="2" r="1.1" fill="#ddd"/><circle cx="3.2" cy="2" r=".6" fill="#222"/></svg>
<div style="left:752.20px;top:26.00px;width:1.00px;height:8.60px;background:#c9b79a;"></div>
<div style="left:757.00px;top:24.40px;width:29.70px;height:12.30px;background:#f5f5f5;border:1px solid #d2d2d2;box-sizing:border-box;border-radius:1.5px;box-shadow:0 .6px .5px rgba(0,0,0,.1);"></div>
<span style="left:762.20px;top:26.69px;font-size:6.47px;line-height:8.41px;color:#222;white-space:nowrap;transform:scaleX(0.960);transform-origin:0 50%;-webkit-text-stroke:0.1px #222;">Filter</span>
<svg style="left:779.60px;top:30.60px;" width="3.60" height="2.20" viewBox="0 0 3.6 2.2"><path d="M0 0 L3.6 0 L1.8 2.2Z" fill="#111"/></svg>
<div style="left:791.30px;top:26.00px;width:1.00px;height:8.60px;background:#c9b79a;"></div>
<div style="left:796.20px;top:24.00px;width:37.80px;height:12.90px;background:#3ea7cb;border-radius:1.6px;box-shadow:0 .6px .5px rgba(0,0,0,.15);"></div>
<span style="left:801.80px;top:26.69px;font-size:6.47px;line-height:8.41px;color:#e8f6fb;white-space:nowrap;transform:scaleX(0.891);transform-origin:0 50%;">Create set</span>
<div style="left:418.00px;top:37.80px;width:617.00px;height:1.00px;background:#e0e0e0;"></div>
<svg style="left:419px;top:39px" width="612" height="523" viewBox="419 39 612 523"><defs><linearGradient id="bg" x1="0" y1="0" x2="0" y2="1"><stop offset="0" stop-color="#fbfbfb"/><stop offset="1" stop-color="#b7b7b7"/></linearGradient><linearGradient id="sf" gradientUnits="userSpaceOnUse" x1="640" y1="530" x2="980" y2="185"><stop offset="0" stop-color="#8c8c8c"/><stop offset=".45" stop-color="#767676"/><stop offset="1" stop-color="#424242"/></linearGradient><clipPath id="cT"><polygon points="461.0,370.0 642.3,241.8 644.2,242.2 645.6,238.5 772.0,148.5 773.8,149.0 775.3,145.3 826.2,108.7 887.2,129.9 903.4,114.9 934.5,126.9 919.6,141.5 985.6,168.5 881.7,268.5 879.5,269.0 877.7,272.0 733.3,416.4 731.5,417.5 730.0,421.3 637.0,514.3 554.8,453.6 511.0,491.5 476.0,459.5 521.8,421.8" /></clipPath><clipPath id="cF"><polygon points="461.0,370.0 826.2,108.7 828.1,109.4 463.0,371.6" /><polygon points="463.0,371.6 828.1,109.4 830.0,110.1 465.0,373.3" /><polygon points="465.0,373.3 470.9,369.0 472.9,370.6 467.0,374.9" /><polygon points="641.1,246.4 649.5,240.3 651.6,241.4 643.1,247.5" /><polygon points="773.6,150.8 779.9,146.2 781.9,147.1 775.6,151.6" /><polygon points="827.3,112.1 830.0,110.1 832.0,110.9 829.2,112.9" /><polygon points="467.0,374.9 472.9,370.6 474.9,372.3 469.0,376.6" /><polygon points="643.1,247.5 651.6,241.4 653.6,242.5 645.1,248.7" /><polygon points="775.6,151.6 781.9,147.1 783.9,147.9 777.6,152.5" /><polygon points="829.2,112.9 832.0,110.9 833.9,111.6 831.1,113.6" /><polygon points="469.0,376.6 474.9,372.3 477.0,373.9 471.1,378.2" /><polygon points="645.1,248.7 653.6,242.5 655.6,243.7 647.2,249.8" /><polygon points="777.6,152.5 783.9,147.9 785.9,148.7 779.6,153.3" /><polygon points="831.1,113.6 833.9,111.6 835.8,112.3 833.1,114.3" /><polygon points="471.1,378.2 477.0,373.9 479.0,375.6 473.1,379.9" /><polygon points="647.2,249.8 655.6,243.7 657.7,244.8 649.3,251.0" /><polygon points="779.6,153.3 785.9,148.7 787.9,149.6 781.6,154.2" /><polygon points="833.1,114.3 835.8,112.3 837.8,113.0 835.0,115.1" /><polygon points="473.1,379.9 479.0,375.6 481.1,377.2 475.1,381.6" /><polygon points="649.3,251.0 657.7,244.8 659.8,246.0 651.3,252.2" /><polygon points="781.6,154.2 787.9,149.6 789.9,150.4 783.6,155.0" /><polygon points="835.0,115.1 837.8,113.0 839.7,113.8 837.0,115.8" /><polygon points="475.1,381.6 481.1,377.2 483.1,378.9 477.2,383.3" /><polygon points="651.3,252.2 659.8,246.0 661.8,247.1 653.4,253.3" /><polygon points="783.6,155.0 789.9,150.4 791.9,151.3 785.6,155.9" /><polygon points="837.0,115.8 839.7,113.8 841.7,114.5 838.9,116.5" /><polygon points="477.2,383.3 483.1,378.9 485.2,380.6 479.3,384.9" /><polygon points="653.4,253.3 661.8,247.1 663.9,248.3 655.5,254.5" /><polygon points="785.6,155.9 791.9,151.3 793.9,152.1 787.6,156.7" /><polygon points="838.9,116.5 841.7,114.5 843.7,115.2 840.9,117.3" /><polygon points="479.3,384.9 485.2,380.6 487.3,382.2 481.3,386.6" /><polygon points="655.5,254.5 663.9,248.3 666.0,249.4 657.6,255.7" /><polygon points="787.6,156.7 793.9,152.1 795.9,152.9 789.6,157.6" /><polygon points="840.9,117.3 843.7,115.2 845.6,116.0 842.9,118.0" /><polygon points="481.3,386.6 487.3,382.2 489.4,383.9 483.4,388.3" /><polygon points="657.6,255.7 666.0,249.4 668.1,250.6 659.7,256.9" /><polygon points="789.6,157.6 795.9,152.9 797.9,153.8 791.6,158.5" /><polygon points="842.9,118.0 845.6,116.0 847.6,116.7 844.8,118.8" /><polygon points="483.4,388.3 489.4,383.9 491.5,385.6 485.5,390.1" /><polygon points="659.7,256.9 668.1,250.6 670.2,251.8 661.8,258.1" /><polygon points="791.6,158.5 797.9,153.8 799.9,154.6 793.7,159.3" /><polygon points="844.8,118.8 847.6,116.7 849.6,117.5 846.8,119.5" /><polygon points="485.5,390.1 491.5,385.6 493.6,387.3 487.6,391.8" /><polygon points="661.8,258.1 670.2,251.8 672.3,253.0 663.9,259.3" /><polygon points="793.7,159.3 799.9,154.6 802.0,155.5 795.7,160.2" /><polygon points="846.8,119.5 849.6,117.5 851.6,118.2 848.8,120.3" /><polygon points="487.6,391.8 493.6,387.3 495.7,389.0 489.7,393.5" /><polygon points="663.9,259.3 672.3,253.0 674.4,254.1 666.0,260.5" /><polygon points="795.7,160.2 802.0,155.5 804.0,156.4 797.8,161.1" /><polygon points="848.8,120.3 851.6,118.2 853.6,119.0 850.8,121.0" /><polygon points="489.7,393.5 495.7,389.0 497.8,390.7 491.9,395.2" /><polygon points="666.0,260.5 674.4,254.1 676.6,255.3 668.1,261.7" /><polygon points="797.8,161.1 804.0,156.4 806.1,157.2 799.8,162.0" /><polygon points="850.8,121.0 853.6,119.0 855.6,119.7 852.8,121.8" /><polygon points="491.9,395.2 497.8,390.7 499.9,392.5 494.0,397.0" /><polygon points="668.1,261.7 676.6,255.3 678.7,256.5 670.3,262.9" /><polygon points="799.8,162.0 806.1,157.2 808.1,158.1 801.9,162.8" /><polygon points="852.8,121.8 855.6,119.7 857.6,120.5 854.8,122.6" /><polygon points="494.0,397.0 499.9,392.5 502.1,394.2 496.1,398.7" /><polygon points="670.3,262.9 678.7,256.5 680.8,257.7 672.4,264.1" /><polygon points="801.9,162.8 808.1,158.1 810.2,158.9 803.9,163.7" /><polygon points="854.8,122.6 857.6,120.5 859.6,121.2 856.8,123.3" /><polygon points="496.1,398.7 502.1,394.2 504.2,395.9 498.3,400.5" /><polygon points="672.4,264.1 680.8,257.7 683.0,258.9 674.6,265.4" /><polygon points="803.9,163.7 810.2,158.9 812.2,159.8 806.0,164.6" /><polygon points="856.8,123.3 859.6,121.2 861.6,122.0 858.9,124.1" /><polygon points="498.3,400.5 504.2,395.9 506.4,397.7 500.4,402.3" /><polygon points="674.6,265.4 683.0,258.9 685.2,260.1 676.7,266.6" /><polygon points="806.0,164.6 812.2,159.8 814.3,160.7 808.1,165.5" /><polygon points="858.9,124.1 861.6,122.0 863.6,122.7 860.9,124.8" /><polygon points="500.4,402.3 506.4,397.7 508.6,399.5 502.6,404.1" /><polygon points="676.7,266.6 685.2,260.1 687.3,261.3 678.9,267.8" /><polygon points="808.1,165.5 814.3,160.7 816.4,161.6 810.2,166.4" /><polygon points="860.9,124.8 863.6,122.7 865.7,123.5 862.9,125.6" /><polygon points="502.6,404.1 508.6,399.5 510.8,401.2 504.8,405.8" /><polygon points="678.9,267.8 687.3,261.3 689.5,262.5 681.1,269.0" /><polygon points="810.2,166.4 816.4,161.6 818.5,162.4 812.3,167.3" /><polygon points="862.9,125.6 865.7,123.5 867.7,124.3 865.0,126.4" /><polygon points="504.8,405.8 510.8,401.2 513.0,403.0 507.0,407.6" /><polygon points="681.1,269.0 689.5,262.5 691.7,263.7 683.3,270.3" /><polygon points="812.3,167.3 818.5,162.4 820.6,163.3 814.4,168.2" /><polygon points="863.6,127.4 867.7,124.3 869.7,125.0 865.6,128.2" /><polygon points="507.0,407.6 515.9,400.7 518.1,402.5 509.2,409.4" /><polygon points="683.3,270.3 691.7,263.7 693.9,265.0 685.5,271.5" /><polygon points="814.4,168.2 820.6,163.3 822.7,164.2 816.5,169.1" /><polygon points="864.3,129.3 869.7,125.0 871.8,125.8 866.3,130.1" /><polygon points="509.2,409.4 521.1,400.2 523.3,401.9 511.4,411.2" /><polygon points="685.5,271.5 693.9,265.0 696.1,266.2 687.7,272.8" /><polygon points="816.5,169.1 822.7,164.2 824.8,165.1 818.6,170.0" /><polygon points="866.3,130.1 871.8,125.8 873.8,126.6 868.4,130.9" /><polygon points="511.4,411.2 523.3,401.9 525.5,403.7 513.6,413.1" /><polygon points="687.7,272.8 696.1,266.2 698.3,267.4 689.9,274.0" /><polygon points="818.6,170.0 824.8,165.1 826.9,166.0 820.7,170.9" /><polygon points="867.0,131.9 873.8,126.6 875.9,127.3 869.1,132.7" /><polygon points="513.6,413.1 528.4,401.4 530.7,403.2 515.9,414.9" /><polygon points="689.9,274.0 698.3,267.4 700.5,268.7 692.1,275.3" /><polygon points="820.7,170.9 826.9,166.0 829.0,166.9 822.9,171.8" /><polygon points="869.1,132.7 875.9,127.3 878.0,128.1 871.2,133.5" /><polygon points="515.9,414.9 530.7,403.2 532.9,405.0 518.1,416.7" /><polygon points="692.1,275.3 700.5,268.7 702.7,269.9 694.4,276.6" /><polygon points="822.9,171.8 829.0,166.9 831.2,167.8 825.0,172.7" /><polygon points="869.8,134.6 878.0,128.1 880.0,128.9 871.9,135.4" /><polygon points="518.1,416.7 535.8,402.7 538.1,404.4 520.4,418.6" /><polygon points="694.4,276.6 702.7,269.9 705.0,271.2 696.6,277.8" /><polygon points="823.4,173.9 831.2,167.8 833.3,168.7 825.6,174.8" /><polygon points="871.9,135.4 880.0,128.9 882.1,129.7 874.0,136.2" /><polygon points="520.4,418.6 538.1,404.4 540.3,406.2 522.6,420.4" /><polygon points="616.2,342.1 626.1,334.2 628.4,335.6 618.5,343.6" /><polygon points="692.4,281.2 707.0,269.5 709.3,270.7 694.6,282.5" /><polygon points="770.4,218.9 774.0,216.0 776.2,217.1 772.6,219.9" /><polygon points="822.4,177.4 834.8,167.5 837.0,168.3 824.6,178.3" /><polygon points="874.0,136.2 882.1,129.7 884.2,130.5 876.1,137.0" /><polygon points="522.6,420.4 540.3,406.2 542.6,408.0 524.9,422.3" /><polygon points="613.4,347.6 633.2,331.7 635.5,333.2 615.7,349.2" /><polygon points="690.3,286.0 711.4,269.1 713.6,270.3 692.6,287.3" /><polygon points="767.3,224.3 781.5,212.9 783.7,213.9 769.5,225.3" /><polygon points="823.0,179.5 840.0,165.9 842.2,166.8 825.2,180.5" /><polygon points="874.7,138.1 884.2,130.5 886.3,131.3 876.8,138.9" /><polygon points="524.9,422.3 542.6,408.0 544.9,409.8 527.2,424.2" /><polygon points="610.7,353.2 637.9,331.3 640.2,332.8 612.9,354.8" /><polygon points="690.4,289.0 715.7,268.7 717.9,269.9 692.7,290.3" /><polygon points="767.7,226.8 785.4,212.5 787.6,213.5 769.9,227.9" /><polygon points="823.6,181.8 842.2,166.8 844.3,167.7 825.8,182.7" /><polygon points="876.8,138.9 886.3,131.3 888.4,132.0 878.9,139.7" /><polygon points="527.2,424.2 547.8,407.5 550.1,409.3 529.5,426.0" /><polygon points="610.4,356.9 642.6,330.8 644.9,332.3 612.7,358.5" /><polygon points="690.5,292.1 720.0,268.3 722.2,269.5 692.8,293.4" /><polygon points="768.1,229.4 789.4,212.1 791.6,213.2 770.3,230.5" /><polygon points="824.2,184.0 845.8,166.5 848.0,167.4 826.4,184.9" /><polygon points="878.9,139.7 888.4,132.0 890.5,132.8 881.0,140.5" /><polygon points="529.5,426.0 550.1,409.3 552.4,411.1 531.8,427.9" /><polygon points="612.7,358.5 647.3,330.4 649.6,331.8 615.0,360.1" /><polygon points="692.8,293.4 722.2,269.5 724.5,270.8 695.1,294.7" /><polygon points="768.5,232.0 793.3,211.8 795.5,212.8 770.7,233.1" /><polygon points="826.4,184.9 849.5,166.2 851.7,167.1 828.6,185.9" /><polygon points="881.0,140.5 890.5,132.8 892.6,133.6 883.2,141.4" /><polygon points="531.8,427.9 552.4,411.1 554.8,412.9 534.1,429.8" /><polygon points="612.4,362.2 649.6,331.8 651.9,333.3 614.8,363.8" /><polygon points="692.9,296.5 726.5,269.1 728.8,270.4 695.2,297.9" /><polygon points="768.9,234.6 795.5,212.8 797.8,213.9 771.1,235.7" /><polygon points="827.0,187.2 851.7,167.1 853.8,168.0 829.2,188.1" /><polygon points="883.2,141.4 892.6,133.6 894.8,134.4 885.3,142.2" /><polygon points="534.1,429.8 554.8,412.9 557.1,414.8 536.5,431.7" /><polygon points="614.8,363.8 654.3,331.4 656.7,332.9 617.1,365.4" /><polygon points="695.2,297.9 728.8,270.4 731.1,271.6 697.6,299.2" /><polygon points="771.1,235.7 799.5,212.5 801.7,213.5 773.4,236.8" /><polygon points="829.2,188.1 853.8,168.0 856.0,168.9 831.4,189.1" /><polygon points="885.3,142.2 894.8,134.4 896.9,135.2 887.4,143.0" /><polygon points="536.5,431.7 557.1,414.8 559.4,416.6 538.8,433.7" /><polygon points="617.1,365.4 656.7,332.9 659.0,334.3 619.5,367.0" /><polygon points="697.6,299.2 731.1,271.6 733.4,272.9 699.9,300.6" /><polygon points="773.4,236.8 801.7,213.5 804.0,214.6 775.7,237.9" /><polygon points="831.4,189.1 856.0,168.9 858.2,169.8 833.6,190.1" /><polygon points="887.4,143.0 896.9,135.2 899.0,136.0 889.6,143.8" /><polygon points="538.8,433.7 559.4,416.6 561.8,418.4 541.2,435.6" /><polygon points="619.5,367.0 659.0,334.3 661.3,335.8 621.8,368.6" /><polygon points="699.9,300.6 733.4,272.9 735.7,274.1 702.2,301.9" /><polygon points="775.7,237.9 804.0,214.6 806.2,215.6 778.0,239.1" /><polygon points="833.6,190.1 858.2,169.8 860.4,170.7 835.8,191.0" /><polygon points="889.6,143.8 899.0,136.0 901.2,136.8 891.7,144.7" /><polygon points="541.2,435.6 561.8,418.4 564.2,420.3 543.5,437.5" /><polygon points="621.8,368.6 661.3,335.8 663.7,337.4 624.2,370.3" /><polygon points="702.2,301.9 735.7,274.1 738.0,275.4 704.6,303.3" /><polygon points="778.0,239.1 806.2,215.6 808.5,216.7 780.3,240.2" /><polygon points="835.8,191.0 860.4,170.7 862.6,171.6 838.1,192.0" /><polygon points="891.7,144.7 901.2,136.8 903.3,137.6 893.9,145.5" /><polygon points="543.5,437.5 564.2,420.3 566.5,422.2 545.9,439.5" /><polygon points="624.2,370.3 663.7,337.4 666.1,338.9 626.6,371.9" /><polygon points="704.6,303.3 738.0,275.4 740.4,276.7 706.9,304.7" /><polygon points="780.3,240.2 808.5,216.7 810.8,217.7 782.6,241.3" /><polygon points="838.1,192.0 862.6,171.6 864.8,172.5 840.3,193.0" /><polygon points="893.9,145.5 903.3,137.6 905.5,138.4 896.1,146.3" /><polygon points="545.9,439.5 566.5,422.2 568.9,424.0 548.3,441.4" /><polygon points="626.6,371.9 666.1,338.9 668.4,340.4 628.9,373.6" /><polygon points="709.1,302.9 740.4,276.7 742.7,277.9 711.4,304.2" /><polygon points="782.6,241.3 810.8,217.7 813.0,218.8 784.9,242.5" /><polygon points="841.9,191.7 863.3,173.7 865.5,174.7 844.1,192.7" /><polygon points="896.1,146.3 905.5,138.4 907.6,139.3 898.2,147.2" /><polygon points="548.3,441.4 568.9,424.0 571.3,425.9 550.7,443.4" /><polygon points="631.5,371.4 666.1,342.4 668.5,343.9 633.9,373.1" /><polygon points="711.4,304.2 740.7,279.6 743.0,280.9 713.8,305.6" /><polygon points="784.9,242.5 811.3,220.2 813.6,221.3 787.2,243.6" /><polygon points="844.1,192.7 865.5,174.7 867.8,175.6 846.4,193.6" /><polygon points="898.2,147.2 907.6,139.3 909.8,140.1 900.4,148.0" /><polygon points="550.7,443.4 571.3,425.9 573.8,427.8 553.1,445.4" /><polygon points="633.9,373.1 668.5,343.9 670.9,345.4 636.3,374.7" /><polygon points="716.0,303.8 743.0,280.9 745.4,282.2 718.3,305.2" /><polygon points="789.0,242.1 813.6,221.3 815.9,222.4 791.3,243.3" /><polygon points="848.0,192.3 866.3,176.8 868.5,177.8 850.2,193.3" /><polygon points="900.4,148.0 909.8,140.1 912.0,140.9 902.6,148.8" /><polygon points="553.1,445.4 573.8,427.8 576.2,429.7 555.5,447.3" /><polygon points="638.9,372.6 668.5,347.5 670.9,349.0 641.3,374.2" /><polygon points="718.3,305.2 743.4,283.9 745.7,285.2 720.7,306.6" /><polygon points="793.1,241.7 814.2,223.8 816.5,224.9 795.5,242.9" /><polygon points="851.8,192.0 867.0,179.0 869.3,180.0 854.0,193.0" /><polygon points="902.6,148.8 912.0,140.9 914.2,141.7 904.8,149.7" /><polygon points="555.5,447.3 573.3,432.2 575.7,434.1 558.0,449.3" /><polygon points="643.8,372.1 668.5,351.1 670.9,352.6 646.3,373.7" /><polygon points="725.0,302.9 743.7,287.0 746.1,288.3 727.4,304.3" /><polygon points="797.2,241.3 814.8,226.4 817.1,227.5 799.6,242.5" /><polygon points="855.6,191.6 867.8,181.2 870.0,182.2 857.9,192.6" /><polygon points="904.8,149.7 914.2,141.7 916.4,142.5 907.0,150.5" /><polygon points="558.0,449.3 575.7,434.1 578.2,436.1 560.4,451.3" /><polygon points="648.8,371.6 666.1,356.8 668.5,358.4 651.2,373.2" /><polygon points="731.6,300.7 739.9,293.5 742.3,294.9 734.0,302.0" /><polygon points="801.4,241.0 815.4,228.9 817.7,230.1 803.7,242.1" /><polygon points="907.0,150.5 916.4,142.5 918.6,143.4 909.2,151.4" /><polygon points="560.4,451.3 578.2,436.1 580.6,438.0 562.9,453.3" /><polygon points="653.7,371.1 663.6,362.6 666.1,364.2 656.2,372.7" /><polygon points="805.5,240.6 812.5,234.5 814.9,235.6 807.8,241.7" /><polygon points="910.6,150.2 918.6,143.4 920.8,144.2 912.8,151.1" /><polygon points="562.9,453.3 580.6,438.0 583.1,439.9 565.3,455.4" /><polygon points="656.2,372.7 666.1,364.2 668.5,365.8 658.6,374.4" /><polygon points="807.8,241.7 814.9,235.6 817.2,236.8 810.2,242.9" /><polygon points="912.8,151.1 920.8,144.2 923.0,145.0 915.0,151.9" /><polygon points="565.3,455.4 580.2,442.5 582.7,444.5 567.8,457.4" /><polygon points="658.6,374.4 668.5,365.8 671.0,367.4 661.1,376.1" /><polygon points="810.2,242.9 817.2,236.8 819.6,237.9 812.6,244.0" /><polygon points="915.0,151.9 923.0,145.0 925.2,145.8 917.3,152.8" /><polygon points="567.8,457.4 582.7,444.5 585.2,446.4 570.3,459.4" /><polygon points="661.1,376.1 671.0,367.4 673.5,369.1 663.6,377.7" /><polygon points="812.6,244.0 819.6,237.9 822.0,239.0 815.0,245.2" /><polygon points="918.6,151.6 925.2,145.8 927.4,146.7 920.8,152.5" /><polygon points="570.3,459.4 582.2,449.0 584.7,451.0 572.8,461.5" /><polygon points="663.6,377.7 673.5,369.1 676.0,370.7 666.1,379.4" /><polygon points="815.0,245.2 822.0,239.0 824.3,240.2 817.3,246.4" /><polygon points="920.8,152.5 927.4,146.7 929.7,147.5 923.1,153.3" /><polygon points="572.8,461.5 584.7,451.0 587.3,453.0 575.3,463.6" /><polygon points="666.1,379.4 676.0,370.7 678.5,372.4 668.6,381.1" /><polygon points="817.3,246.4 824.3,240.2 826.7,241.3 819.7,247.5" /><polygon points="924.4,152.1 929.7,147.5 931.9,148.4 926.7,153.0" /><polygon points="575.3,463.6 584.3,455.6 586.8,457.7 577.9,465.6" /><polygon points="668.6,381.1 678.5,372.4 681.0,374.0 671.1,382.8" /><polygon points="819.7,247.5 826.7,241.3 829.1,242.5 822.1,248.7" /><polygon points="926.7,153.0 931.9,148.4 934.2,149.2 928.9,153.9" /><polygon points="577.9,465.6 583.9,460.3 586.4,462.4 580.4,467.7" /><polygon points="671.1,382.8 681.0,374.0 683.5,375.7 673.7,384.5" /><polygon points="822.1,248.7 829.1,242.5 831.5,243.6 824.6,249.9" /><polygon points="930.2,152.7 934.2,149.2 936.4,150.1 932.5,153.5" /><polygon points="580.4,467.7 586.4,462.4 589.0,464.4 583.0,469.8" /><polygon points="673.7,384.5 683.5,375.7 686.1,377.4 676.2,386.2" /><polygon points="824.6,249.9 831.5,243.6 833.9,244.8 827.0,251.0" /><polygon points="933.8,152.4 936.4,150.1 938.7,150.9 936.1,153.2" /><polygon points="583.0,469.8 589.0,464.4 591.5,466.5 585.6,471.9" /><polygon points="676.2,386.2 686.1,377.4 688.6,379.1 678.7,388.0" /><polygon points="827.0,251.0 833.9,244.8 836.4,246.0 829.4,252.2" /><polygon points="936.1,153.2 938.7,150.9 941.0,151.8 938.4,154.1" /><polygon points="585.6,471.9 591.5,466.5 594.1,468.6 588.1,474.0" /><polygon points="678.7,388.0 688.6,379.1 691.2,380.8 681.3,389.7" /><polygon points="829.4,252.2 836.4,246.0 838.8,247.1 831.9,253.4" /><polygon points="938.4,154.1 941.0,151.8 943.2,152.6 940.6,155.0" /><polygon points="588.1,474.0 594.1,468.6 596.7,470.7 590.7,476.1" /><polygon points="681.3,389.7 691.2,380.8 693.7,382.5 683.9,391.4" /><polygon points="831.9,253.4 838.8,247.1 841.3,248.3 834.3,254.6" /><polygon points="940.6,155.0 943.2,152.6 945.5,153.5 942.9,155.8" /><polygon points="590.7,476.1 596.7,470.7 599.3,472.8 593.3,478.3" /><polygon points="683.9,391.4 693.7,382.5 696.3,384.2 686.5,393.2" /><polygon points="834.3,254.6 841.3,248.3 843.7,249.5 836.8,255.8" /><polygon points="942.9,155.8 945.5,153.5 947.8,154.3 945.2,156.7" /><polygon points="593.3,478.3 599.3,472.8 602.0,474.9 596.0,480.4" /><polygon points="686.5,393.2 696.3,384.2 698.9,385.9 689.1,394.9" /><polygon points="836.8,255.8 843.7,249.5 846.2,250.7 839.2,257.0" /><polygon points="945.2,156.7 947.8,154.3 950.1,155.2 947.5,157.6" /><polygon points="596.0,480.4 602.0,474.9 604.6,477.1 598.6,482.6" /><polygon points="689.1,394.9 698.9,385.9 701.5,387.6 691.7,396.7" /><polygon points="839.2,257.0 846.2,250.7 848.6,251.8 841.7,258.2" /><polygon points="947.5,157.6 950.1,155.2 952.4,156.1 949.9,158.4" /><polygon points="598.6,482.6 604.6,477.1 607.2,479.2 601.3,484.8" /><polygon points="691.7,396.7 701.5,387.6 704.1,389.3 694.3,398.5" /><polygon points="841.7,258.2 848.6,251.8 851.1,253.0 844.2,259.4" /><polygon points="949.9,158.4 952.4,156.1 954.7,156.9 952.2,159.3" /><polygon points="601.3,484.8 607.2,479.2 609.9,481.4 603.9,486.9" /><polygon points="694.3,398.5 704.1,389.3 706.8,391.1 696.9,400.2" /><polygon points="844.2,259.4 851.1,253.0 853.6,254.2 846.7,260.7" /><polygon points="952.2,159.3 954.7,156.9 957.1,157.8 954.5,160.2" /><polygon points="603.9,486.9 609.9,481.4 612.6,483.5 606.6,489.1" /><polygon points="696.9,400.2 706.8,391.1 709.4,392.8 699.6,402.0" /><polygon points="846.7,260.7 853.6,254.2 856.1,255.4 849.2,261.9" /><polygon points="954.5,160.2 957.1,157.8 959.4,158.7 956.8,161.1" /><polygon points="606.6,489.1 612.6,483.5 615.3,485.7 609.3,491.3" /><polygon points="699.6,402.0 709.4,392.8 712.1,394.6 702.3,403.8" /><polygon points="849.2,261.9 856.1,255.4 858.6,256.6 851.7,263.1" /><polygon points="956.8,161.1 959.4,158.7 961.7,159.6 959.2,162.0" /><polygon points="609.3,491.3 615.3,485.7 618.0,487.9 612.0,493.5" /><polygon points="702.3,403.8 712.1,394.6 714.7,396.3 704.9,405.6" /><polygon points="851.7,263.1 858.6,256.6 861.1,257.8 854.3,264.3" /><polygon points="959.2,162.0 961.7,159.6 964.1,160.4 961.5,162.8" /><polygon points="612.0,493.5 618.0,487.9 620.7,490.1 614.7,495.8" /><polygon points="704.9,405.6 714.7,396.3 717.4,398.1 707.6,407.4" /><polygon points="854.3,264.3 861.1,257.8 863.7,259.1 856.8,265.6" /><polygon points="961.5,162.8 964.1,160.4 966.5,161.3 963.9,163.7" /><polygon points="614.7,495.8 620.7,490.1 623.4,492.3 617.5,498.0" /><polygon points="707.6,407.4 717.4,398.1 720.1,399.9 710.3,409.3" /><polygon points="856.8,265.6 863.7,259.1 866.2,260.3 859.3,266.8" /><polygon points="963.9,163.7 966.5,161.3 968.8,162.2 966.3,164.6" /><polygon points="617.5,498.0 623.4,492.3 626.2,494.5 620.2,500.3" /><polygon points="710.3,409.3 720.1,399.9 722.8,401.7 713.0,411.1" /><polygon points="859.3,266.8 866.2,260.3 868.8,261.5 861.9,268.1" /><polygon points="966.3,164.6 968.8,162.2 971.2,163.1 968.7,165.5" /><polygon points="620.2,500.3 626.2,494.5 628.9,496.7 623.0,502.5" /><polygon points="713.0,411.1 722.8,401.7 725.5,403.5 715.8,412.9" /><polygon points="861.9,268.1 868.8,261.5 871.3,262.7 864.5,269.3" /><polygon points="968.7,165.5 971.2,163.1 973.6,164.0 971.0,166.4" /><polygon points="623.0,502.5 628.9,496.7 631.7,499.0 625.7,504.8" /><polygon points="715.8,412.9 725.5,403.5 728.3,405.3 718.5,414.8" /><polygon points="864.5,269.3 871.3,262.7 873.9,264.0 867.1,270.6" /><polygon points="971.0,166.4 973.6,164.0 976.0,164.9 973.4,167.3" /><polygon points="625.7,504.8 631.7,499.0 634.5,501.2 628.5,507.1" /><polygon points="718.5,414.8 728.3,405.3 731.0,407.1 721.2,416.6" /><polygon points="867.1,270.6 873.9,264.0 876.5,265.2 869.6,271.8" /><polygon points="973.4,167.3 976.0,164.9 978.4,165.8 975.8,168.2" /><polygon points="628.5,507.1 634.5,501.2 637.3,503.5 631.3,509.4" /><polygon points="721.2,416.6 731.0,407.1 733.8,408.9 724.0,418.5" /><polygon points="869.6,271.8 876.5,265.2 879.0,266.4 872.2,273.1" /><polygon points="975.8,168.2 978.4,165.8 980.8,166.7 978.3,169.2" /><polygon points="631.3,509.4 980.8,166.7 983.2,167.6 634.2,511.7" /><polygon points="634.2,511.7 983.2,167.6 985.6,168.5 637.0,514.0" /><polygon points="526.2,419.0 469.6,464.4 506.6,498.2 563.4,449.3" /><polygon points="882.2,131.2 904.6,113.2 937.9,125.1 916.1,143.9" /><polygon points="440.4,377.9 457.1,366.0 643.9,518.7 626.8,535.7" /><polygon points="821.7,107.3 829.4,101.8 997.6,163.9 990.8,170.8" /><polygon points="440.4,377.9 829.4,101.8 833.8,103.4 444.9,381.7" /><polygon points="620.3,530.2 992.1,161.8 997.6,163.9 626.8,535.7" /></clipPath><clipPath id="cS"><polygon points="637.0,514.3 730.0,421.3 733.3,452.5 639.5,548.0" /><polygon points="733.3,416.4 877.7,272.0 876.0,303.7 736.5,446.0" /><polygon points="881.7,268.5 985.6,168.5 979.0,198.0 878.5,302.0" /></clipPath></defs><rect x="419" y="39" width="612" height="523" fill="url(#bg)"/><polygon points="730.0,421.3 733.3,416.4 736.5,446.0 733.3,452.5" fill="#3a3a3a"/><polygon points="877.7,272.0 881.7,268.5 878.5,302.0 876.0,303.7" fill="#333"/><polygon points="637.0,514.3 730.0,421.3 733.3,452.5 639.5,548.0" fill="url(#sf)"/><polygon points="733.3,416.4 877.7,272.0 876.0,303.7 736.5,446.0" fill="url(#sf)"/><polygon points="881.7,268.5 985.6,168.5 979.0,198.0 878.5,302.0" fill="url(#sf)"/><g clip-path="url(#cS)"><path d="M630.9 520.0L636.2 555.1M632.5 518.5L637.1 554.2M634.0 517.0L638.0 553.2M635.5 515.5L638.9 552.3M637.0 514.0L639.7 551.4M638.5 512.5L640.6 550.5M640.0 511.0L641.5 549.6M641.5 509.6L642.4 548.6M643.0 508.1L643.3 547.7M644.5 506.6L644.2 546.8M645.9 505.1L645.1 545.9M647.4 503.7L646.0 544.9M648.9 502.2L646.9 544.0M650.3 500.8L647.8 543.1M651.8 499.3L648.6 542.2M653.3 497.9L649.5 541.2M654.7 496.4L650.4 540.3M656.2 495.0L651.3 539.4M657.6 493.6L652.2 538.5M659.0 492.2L653.1 537.5M660.5 490.7L654.0 536.6M661.9 489.3L654.9 535.7M663.3 487.9L655.8 534.8M664.8 486.5L656.7 533.8M666.2 485.1L657.6 532.9M667.6 483.7L658.5 532.0M669.0 482.3L659.4 531.0M670.4 480.9L660.3 530.1M671.8 479.5L661.2 529.2M673.2 478.1L662.1 528.3M674.6 476.7L663.0 527.3M676.0 475.4L663.9 526.4M677.4 474.0L664.8 525.5M678.7 472.6L665.7 524.5M680.1 471.3L666.6 523.6M681.5 469.9L667.5 522.7M682.9 468.5L668.4 521.7M684.2 467.2L669.3 520.8M685.6 465.8L670.2 519.9M686.9 464.5L671.1 518.9M688.3 463.2L672.0 518.0M689.6 461.8L672.9 517.0M691.0 460.5L673.8 516.1M692.3 459.2L674.7 515.2M693.7 457.8L675.6 514.2M695.0 456.5L676.5 513.3M696.3 455.2L677.4 512.4M697.6 453.9L678.3 511.4M699.0 452.6L679.2 510.5M700.3 451.3L680.1 509.5M701.6 450.0L681.0 508.6M702.9 448.7L681.9 507.7M704.2 447.4L682.8 506.7M705.5 446.1L683.7 505.8M706.8 444.8L684.6 504.8M708.1 443.5L685.5 503.9M709.4 442.2L686.5 503.0M710.7 441.0L687.4 502.0M712.0 439.7L688.3 501.1M713.3 438.4L689.2 500.1M714.5 437.2L690.1 499.2M715.8 435.9L691.0 498.3M717.1 434.6L691.9 497.3M718.3 433.4L692.8 496.4M719.6 432.1L693.7 495.4M720.9 430.9L694.6 494.5M722.1 429.6L695.6 493.5M723.4 428.4L696.5 492.6M724.6 427.2L697.4 491.6M725.9 425.9L698.3 490.7M727.1 424.7L699.2 489.7M728.3 423.5L700.1 488.8M729.6 422.3L701.0 487.9M730.8 421.0L701.9 486.9M732.0 419.8L702.9 486.0M733.3 418.6L703.8 485.0M734.5 417.4L704.7 484.1M735.7 416.2L705.6 483.1M736.9 415.0L706.5 482.2M738.1 413.8L707.4 481.2M739.3 412.6L708.4 480.3M740.5 411.4L709.3 479.3M741.7 410.2L710.2 478.4M742.9 409.0L711.1 477.4M744.1 407.8L712.0 476.5M745.3 406.6L712.9 475.5M746.5 405.5L713.9 474.6M747.7 404.3L714.8 473.6M748.9 403.1L715.7 472.7M750.0 402.0L716.6 471.7M751.2 400.8L717.5 470.7M752.4 399.6L718.5 469.8M753.6 398.5L719.4 468.8M754.7 397.3L720.3 467.9M755.9 396.2L721.2 466.9M757.0 395.0L722.1 466.0M758.2 393.9L723.1 465.0M759.4 392.7L724.0 464.1M760.5 391.6L724.9 463.1M761.7 390.5L725.8 462.2M762.8 389.3L726.8 461.2M763.9 388.2L727.7 460.2M765.1 387.1L728.6 459.3M766.2 385.9L729.5 458.3M767.3 384.8L730.5 457.4M768.5 383.7L731.4 456.4M769.6 382.6L732.3 455.5M770.7 381.5L733.2 454.5M771.8 380.4L734.2 453.5M773.0 379.3L735.1 452.6M774.1 378.2L736.0 451.6M775.2 377.1L736.9 450.7M776.3 376.0L737.9 449.7M777.4 374.9L738.8 448.7M778.5 373.8L739.7 447.8M779.6 372.7L740.6 446.8M780.7 371.6L741.6 445.9M781.8 370.5L742.5 444.9M782.9 369.4L743.4 443.9M784.0 368.4L744.4 443.0M785.0 367.3L745.3 442.0M786.1 366.2L746.2 441.1M787.2 365.1L747.1 440.1M788.3 364.1L748.1 439.1M789.4 363.0L749.0 438.2M790.4 361.9L749.9 437.2M791.5 360.9L750.9 436.2M792.6 359.8L751.8 435.3M793.6 358.8L752.7 434.3M794.7 357.7L753.7 433.3M795.7 356.7L754.6 432.4M796.8 355.6L755.5 431.4M797.8 354.6L756.4 430.5M798.9 353.6L757.4 429.5M799.9 352.5L758.3 428.5M801.0 351.5L759.2 427.6M802.0 350.4L760.2 426.6M803.1 349.4L761.1 425.6M804.1 348.4L762.0 424.7M805.1 347.4L763.0 423.7M806.2 346.3L763.9 422.7M807.2 345.3L764.9 421.8M808.2 344.3L765.8 420.8M809.2 343.3L766.7 419.8M810.3 342.3L767.7 418.8M811.3 341.3L768.6 417.9M812.3 340.3L769.5 416.9M813.3 339.3L770.5 415.9M814.3 338.3L771.4 415.0M815.3 337.3L772.3 414.0M816.3 336.3L773.3 413.0M817.3 335.3L774.2 412.1M818.3 334.3L775.1 411.1M819.3 333.3L776.1 410.1M820.3 332.3L777.0 409.2M821.3 331.3L778.0 408.2M822.3 330.4L778.9 407.2M823.3 329.4L779.8 406.2M824.3 328.4L780.8 405.3M825.2 327.4L781.7 404.3M826.2 326.5L782.7 403.3M827.2 325.5L783.6 402.3M828.2 324.5L784.5 401.4M829.2 323.6L785.5 400.4M830.1 322.6L786.4 399.4M831.1 321.6L787.4 398.5M832.1 320.7L788.3 397.5M833.0 319.7L789.2 396.5M834.0 318.8L790.2 395.5M834.9 317.8L791.1 394.6M835.9 316.9L792.1 393.6M836.8 315.9L793.0 392.6M837.8 315.0L793.9 391.6M838.7 314.0L794.9 390.7M839.7 313.1L795.8 389.7M840.6 312.2L796.8 388.7M841.6 311.2L797.7 387.7M842.5 310.3L798.7 386.8M843.5 309.4L799.6 385.8M844.4 308.5L800.5 384.8M845.3 307.5L801.5 383.8M846.3 306.6L802.4 382.8M847.2 305.7L803.4 381.9M848.1 304.8L804.3 380.9M849.0 303.8L805.3 379.9M850.0 302.9L806.2 378.9M850.9 302.0L807.2 378.0M851.8 301.1L808.1 377.0M852.7 300.2L809.1 376.0M853.6 299.3L810.0 375.0M854.5 298.4L810.9 374.0M855.4 297.5L811.9 373.1M856.3 296.6L812.8 372.1M857.3 295.7L813.8 371.1M858.2 294.8L814.7 370.1M859.1 293.9L815.7 369.1M860.0 293.0L816.6 368.2M860.8 292.1L817.6 367.2M861.7 291.3L818.5 366.2M862.6 290.4L819.5 365.2M863.5 289.5L820.4 364.2M864.4 288.6L821.4 363.3M865.3 287.7L822.3 362.3M866.2 286.9L823.3 361.3M867.1 286.0L824.2 360.3M867.9 285.1L825.2 359.3M868.8 284.2L826.1 358.3M869.7 283.4L827.1 357.4M870.6 282.5L828.0 356.4M871.4 281.6L829.0 355.4M872.3 280.8L829.9 354.4M873.2 279.9L830.9 353.4M874.0 279.1L831.8 352.4M874.9 278.2L832.8 351.5M875.8 277.4L833.7 350.5M876.6 276.5L834.7 349.5M877.5 275.7L835.6 348.5M878.3 274.8L836.6 347.5M879.2 274.0L837.5 346.5M880.0 273.1L838.5 345.6M880.9 272.3L839.4 344.6M881.7 271.4L840.4 343.6M882.6 270.6L841.3 342.6M883.4 269.8L842.3 341.6M884.3 268.9L843.2 340.6M885.1 268.1L844.2 339.6M885.9 267.3L845.2 338.7M886.8 266.5L846.1 337.7M887.6 265.6L847.1 336.7M888.4 264.8L848.0 335.7M889.3 264.0L849.0 334.7M890.1 263.2L849.9 333.7M890.9 262.3L850.9 332.7M891.7 261.5L851.8 331.7M892.6 260.7L852.8 330.8M893.4 259.9L853.7 329.8M894.2 259.1L854.7 328.8M895.0 258.3L855.7 327.8M895.8 257.5L856.6 326.8M896.6 256.7L857.6 325.8M897.5 255.9L858.5 324.8M898.3 255.1L859.5 323.8M899.1 254.3L860.4 322.8M899.9 253.5L861.4 321.9M900.7 252.7L862.3 320.9M901.5 251.9L863.3 319.9M902.3 251.1L864.3 318.9M903.1 250.3L865.2 317.9M903.9 249.5L866.2 316.9M904.7 248.7L867.1 315.9M905.5 247.9L868.1 314.9M906.3 247.1L869.1 313.9M907.1 246.4L870.0 312.9M907.8 245.6L871.0 312.0M908.6 244.8L871.9 311.0M909.4 244.0L872.9 310.0M910.2 243.2L873.8 309.0M911.0 242.5L874.8 308.0M911.8 241.7L875.8 307.0M912.5 240.9L876.7 306.0M913.3 240.2L877.7 305.0M914.1 239.4L878.6 304.0M914.9 238.6L879.6 303.0M915.6 237.9L880.6 302.0M916.4 237.1L881.5 301.0M917.2 236.3L882.5 300.0M917.9 235.6L883.4 299.0M918.7 234.8L884.4 298.1M919.4 234.1L885.4 297.1M920.2 233.3L886.3 296.1M921.0 232.6L887.3 295.1M921.7 231.8L888.3 294.1M922.5 231.1L889.2 293.1M923.2 230.3L890.2 292.1M924.0 229.6L891.1 291.1M924.7 228.8L892.1 290.1M925.5 228.1L893.1 289.1M926.2 227.3L894.0 288.1M927.0 226.6L895.0 287.1M927.7 225.9L896.0 286.1M928.5 225.1L896.9 285.1M929.2 224.4L897.9 284.1M929.9 223.7L898.8 283.1M930.7 222.9L899.8 282.1M931.4 222.2L900.8 281.1M932.2 221.5L901.7 280.1M932.9 220.7L902.7 279.1M933.6 220.0L903.7 278.1M934.4 219.3L904.6 277.1M935.1 218.6L905.6 276.2M935.8 217.9L906.6 275.2M936.5 217.1L907.5 274.2M937.3 216.4L908.5 273.2M938.0 215.7L909.4 272.2M938.7 215.0L910.4 271.2M939.4 214.3L911.4 270.2M940.1 213.6L912.3 269.2M940.8 212.9L913.3 268.2M941.6 212.1L914.3 267.2M942.3 211.4L915.2 266.2M943.0 210.7L916.2 265.2M943.7 210.0L917.2 264.2M944.4 209.3L918.1 263.2M945.1 208.6L919.1 262.2M945.8 207.9L920.1 261.2M946.5 207.2L921.0 260.2M947.2 206.5L922.0 259.2M947.9 205.8L923.0 258.2M948.6 205.1L923.9 257.2M949.3 204.5L924.9 256.2M950.0 203.8L925.9 255.2M950.7 203.1L926.8 254.2M951.4 202.4L927.8 253.2M952.1 201.7L928.8 252.2M952.8 201.0L929.8 251.2M953.5 200.3L930.7 250.2M954.2 199.6L931.7 249.2M954.9 199.0L932.7 248.2M955.5 198.3L933.6 247.2M956.2 197.6L934.6 246.2M956.9 196.9L935.6 245.2M957.6 196.3L936.5 244.2M958.3 195.6L937.5 243.2M958.9 194.9L938.5 242.2M959.6 194.2L939.4 241.2M960.3 193.6L940.4 240.2M961.0 192.9L941.4 239.1M961.6 192.2L942.4 238.1M962.3 191.6L943.3 237.1M963.0 190.9L944.3 236.1M963.7 190.2L945.3 235.1M964.3 189.6L946.2 234.1M965.0 188.9L947.2 233.1M965.7 188.3L948.2 232.1M966.3 187.6L949.1 231.1M967.0 187.0L950.1 230.1M967.6 186.3L951.1 229.1M968.3 185.6L952.1 228.1M969.0 185.0L953.0 227.1M969.6 184.3L954.0 226.1M970.3 183.7L955.0 225.1M970.9 183.0L955.9 224.1M971.6 182.4L956.9 223.1M972.2 181.8L957.9 222.1M972.9 181.1L958.9 221.1M973.5 180.5L959.8 220.1M974.2 179.8L960.8 219.1M974.8 179.2L961.8 218.1M975.5 178.5L962.8 217.1M976.1 177.9L963.7 216.1M976.7 177.3L964.7 215.0M977.4 176.6L965.7 214.0M978.0 176.0L966.6 213.0M978.7 175.4L967.6 212.0M979.3 174.7L968.6 211.0M979.9 174.1L969.6 210.0M980.6 173.5L970.5 209.0M981.2 172.9L971.5 208.0M981.8 172.2L972.5 207.0M982.5 171.6L973.5 206.0M983.1 171.0L974.4 205.0M983.7 170.4L975.4 204.0M984.4 169.7L976.4 203.0M985.0 169.1L977.4 202.0M985.6 168.5L978.3 201.0M986.2 167.9L979.3 199.9M986.8 167.3L980.3 198.9M987.5 166.7L981.3 197.9M988.1 166.0L982.2 196.9" stroke="#1e1e1e" stroke-width=".35" opacity=".6" fill="none"/><path d="M637.0 514.0L985.6 168.5M637.1 515.3L985.4 169.6M637.2 516.5L985.1 170.7M637.3 517.8L984.9 171.8M637.4 519.0L984.6 172.9M637.5 520.3L984.4 174.0M637.6 521.6L984.1 175.1M637.6 522.8L983.9 176.1M637.7 524.1L983.6 177.2M637.8 525.3L983.4 178.3M637.9 526.6L983.2 179.4M638.0 527.9L982.9 180.5M638.1 529.1L982.7 181.6M638.2 530.4L982.4 182.7M638.3 531.6L982.2 183.8M638.4 532.9L981.9 184.9M638.5 534.1L981.7 186.0M638.6 535.4L981.4 187.1M638.7 536.7L981.2 188.2M638.8 537.9L981.0 189.3M638.9 539.2L980.7 190.4M638.9 540.4L980.5 191.4M639.0 541.7L980.2 192.5M639.1 543.0L980.0 193.6M639.2 544.2L979.7 194.7M639.3 545.5L979.5 195.8M639.4 546.7L979.2 196.9M639.5 548.0L979.0 198.0M639.6 549.3L978.8 199.1M639.7 550.5L978.5 200.2" stroke="#1e1e1e" stroke-width=".35" opacity=".55" fill="none"/><polygon points="646.6,531.6 652.4,523.0 658.5,514.3 664.9,505.5 671.4,496.8 678.0,488.4 684.6,480.5 691.2,473.0 697.5,466.0 703.7,459.5 709.6,453.6 715.3,448.0 720.9,442.7 720.9,442.7 713.3,452.8 705.9,462.7 698.9,472.1 692.1,480.9 685.7,489.1 679.7,496.6 673.9,503.5 668.3,509.8 662.8,515.6 657.5,521.1 652.1,526.4 646.6,531.6" fill="#fff" opacity="0.13"/><polygon points="656.8,528.4 661.0,522.2 665.4,516.0 669.9,509.8 674.5,503.8 679.1,497.9 683.6,492.2 688.2,486.9 692.6,481.9 696.9,477.2 701.1,472.7 705.3,468.5 709.4,464.4 709.4,464.4 704.1,471.5 698.9,478.4 693.9,485.0 689.1,491.3 684.6,497.1 680.2,502.6 676.1,507.6 672.1,512.2 668.2,516.5 664.4,520.6 660.6,524.5 656.8,528.4" fill="#fff" opacity="0.1"/><polygon points="637.6,522.5 641.7,517.1 645.8,511.6 650.0,506.2 654.3,501.0 658.6,495.9 662.8,491.1 667.0,486.6 671.2,482.4 675.2,478.5 679.2,474.8 683.0,471.4 686.8,468.1 686.8,468.1 682.3,473.9 678.0,479.6 673.7,485.0 669.5,490.2 665.4,495.1 661.4,499.6 657.5,503.9 653.6,507.9 649.7,511.7 645.7,515.3 641.7,518.9 637.6,522.5" fill="#000" opacity="0.12"/><polygon points="722.9,452.3 731.8,441.3 740.7,430.3 749.6,419.6 758.3,409.3 766.8,399.5 774.9,390.4 782.7,382.0 790.0,374.2 797.0,367.2 803.6,360.6 810.0,354.5 816.1,348.6 816.1,348.6 807.1,359.6 798.1,370.4 789.3,381.0 780.7,391.1 772.5,400.6 764.6,409.6 757.1,417.8 749.9,425.5 743.0,432.7 736.2,439.4 729.5,445.9 722.9,452.3" fill="#fff" opacity="0.12"/><polygon points="781.2,397.5 788.8,388.1 796.3,378.7 803.7,369.7 810.9,361.2 817.8,353.1 824.3,345.7 830.4,338.8 836.2,332.6 841.7,326.8 846.9,321.5 852.0,316.6 856.9,311.7 856.9,311.7 849.6,320.7 842.3,329.6 835.1,338.4 828.0,346.8 821.2,354.8 814.7,362.3 808.5,369.2 802.6,375.6 797.0,381.6 791.6,387.1 786.3,392.4 781.2,397.5" fill="#fff" opacity="0.1"/><polygon points="769.3,389.4 776.9,380.8 784.3,372.3 791.6,364.2 798.7,356.5 805.5,349.2 812.0,342.5 818.1,336.3 823.8,330.7 829.3,325.5 834.5,320.8 839.4,316.4 844.3,312.1 844.3,312.1 837.4,320.0 830.5,327.8 823.7,335.4 817.0,342.8 810.5,349.8 804.2,356.4 798.1,362.6 792.1,368.4 786.4,373.9 780.7,379.2 775.0,384.3 769.3,389.4" fill="#000" opacity="0.1"/><polygon points="859.2,314.8 866.4,305.9 873.4,297.2 880.1,288.9 886.5,281.2 892.5,274.1 898.1,267.6 903.3,261.8 908.2,256.6 912.8,251.9 917.1,247.6 921.3,243.5 925.5,239.6 925.5,239.6 919.4,247.4 913.1,255.2 906.9,262.9 900.8,270.3 894.8,277.5 889.0,284.1 883.4,290.3 878.2,296.0 873.2,301.2 868.4,306.0 863.8,310.5 859.2,314.8" fill="#fff" opacity="0.1"/><polygon points="921.6,247.4 927.6,239.9 933.3,232.7 938.8,226.0 944.0,219.7 948.9,214.0 953.5,208.9 957.8,204.2 962.0,200.0 965.9,196.2 969.8,192.6 973.7,189.2 977.5,185.8 977.5,185.8 972.8,191.8 968.0,198.0 963.0,204.1 958.0,210.2 953.0,216.1 948.0,221.6 943.2,226.8 938.6,231.6 934.1,236.0 929.8,240.0 925.6,243.8 921.6,247.4" fill="#fff" opacity="0.08"/></g><path d="M733.4 417.5L736.2 445.5M881.5 269.5L878.6 301.5" stroke="#8a8a8a" stroke-width=".5" fill="none"/><polygon points="554.8,453.6 637.0,514.3 639.5,548.0 549.8,466.0" fill="#5e5e5e"/><path d="M554.8 453.6L549.8 466.0M555.7 454.3L550.8 466.9M556.6 455.0L551.8 467.8M557.6 455.6L552.8 468.8M558.5 456.3L553.8 469.7M559.4 457.0L554.8 470.6M560.3 457.7L555.8 471.5M561.3 458.4L556.9 472.4M562.2 459.1L557.9 473.4M563.1 459.7L558.9 474.3M564.0 460.4L559.9 475.2M565.0 461.1L560.9 476.1M565.9 461.8L561.9 477.1M566.8 462.5L562.9 478.0M567.7 463.1L563.9 478.9M568.7 463.8L564.9 479.8M569.6 464.5L565.9 480.7M570.5 465.2L566.9 481.7M571.4 465.9L567.9 482.6M572.3 466.6L568.9 483.5M573.3 467.2L570.0 484.4M574.2 467.9L571.0 485.3M575.1 468.6L572.0 486.3M576.0 469.3L573.0 487.2M577.0 470.0L574.0 488.1M577.9 470.7L575.0 489.0M578.8 471.3L576.0 490.0M579.7 472.0L577.0 490.9M580.7 472.7L578.0 491.8M581.6 473.4L579.0 492.7M582.5 474.1L580.0 493.6M583.4 474.7L581.0 494.6M584.4 475.4L582.1 495.5M585.3 476.1L583.1 496.4M586.2 476.8L584.1 497.3M587.1 477.5L585.1 498.2M588.0 478.2L586.1 499.2M589.0 478.8L587.1 500.1M589.9 479.5L588.1 501.0M590.8 480.2L589.1 501.9M591.7 480.9L590.1 502.9M592.7 481.6L591.1 503.8M593.6 482.2L592.1 504.7M594.5 482.9L593.1 505.6M595.4 483.6L594.1 506.5M596.4 484.3L595.2 507.5M597.3 485.0L596.2 508.4M598.2 485.7L597.2 509.3M599.1 486.3L598.2 510.2M600.1 487.0L599.2 511.1M601.0 487.7L600.2 512.1M601.9 488.4L601.2 513.0M602.8 489.1L602.2 513.9M603.8 489.7L603.2 514.8M604.7 490.4L604.2 515.8M605.6 491.1L605.2 516.7M606.5 491.8L606.2 517.6M607.4 492.5L607.2 518.5M608.4 493.2L608.3 519.4M609.3 493.8L609.3 520.4M610.2 494.5L610.3 521.3M611.1 495.2L611.3 522.2M612.1 495.9L612.3 523.1M613.0 496.6L613.3 524.0M613.9 497.2L614.3 525.0M614.8 497.9L615.3 525.9M615.8 498.6L616.3 526.8M616.7 499.3L617.3 527.7M617.6 500.0L618.3 528.7M618.5 500.7L619.3 529.6M619.5 501.3L620.4 530.5M620.4 502.0L621.4 531.4M621.3 502.7L622.4 532.3M622.2 503.4L623.4 533.3M623.1 504.1L624.4 534.2M624.1 504.8L625.4 535.1M625.0 505.4L626.4 536.0M625.9 506.1L627.4 536.9M626.8 506.8L628.4 537.9M627.8 507.5L629.4 538.8M628.7 508.2L630.4 539.7M629.6 508.8L631.4 540.6M630.5 509.5L632.4 541.6M631.5 510.2L633.5 542.5M632.4 510.9L634.5 543.4M633.3 511.6L635.5 544.3M634.2 512.3L636.5 545.2M635.2 512.9L637.5 546.2M636.1 513.6L638.5 547.1M637.0 514.3L639.5 548.0" stroke="#222" stroke-width=".4" opacity=".6" fill="none"/><clipPath id="cN"><polygon points="554.8,453.6 637.0,514.3 639.5,548.0 549.8,466.0" /></clipPath><g clip-path="url(#cN)"><path d="M532.9 437.4L540.8 457.8M535.6 439.4L543.8 460.5M538.4 441.5L546.8 463.3M541.1 443.5L549.8 466.0M543.8 445.5L552.8 468.7M546.6 447.5L555.8 471.5M549.3 449.6L558.8 474.2M552.1 451.6L561.8 476.9M554.8 453.6L564.8 479.7M557.5 455.6L567.7 482.4M560.3 457.6L570.7 485.1M563.0 459.7L573.7 487.9M565.8 461.7L576.7 490.6M568.5 463.7L579.7 493.3M571.2 465.7L582.7 496.1M574.0 467.8L585.7 498.8M576.7 469.8L588.7 501.5M579.5 471.8L591.7 504.3M582.2 473.8L594.6 507.0M584.9 475.9L597.6 509.7M587.7 477.9L600.6 512.5M590.4 479.9L603.6 515.2M593.2 481.9L606.6 517.9M595.9 483.9L609.6 520.7M598.6 486.0L612.6 523.4M601.4 488.0L615.6 526.1M604.1 490.0L618.6 528.9M606.9 492.0L621.6 531.6M609.6 494.1L624.5 534.3M612.3 496.1L627.5 537.1M615.1 498.1L630.5 539.8M617.8 500.1L633.5 542.5M620.6 502.2L636.5 545.3M623.3 504.2L639.5 548.0M626.0 506.2L642.5 550.7M628.8 508.2L645.5 553.5M631.5 510.3L648.5 556.2M634.3 512.3L651.5 558.9M637.0 514.3L654.5 561.7M639.7 516.3L657.4 564.4M642.5 518.3L660.4 567.1M645.2 520.4L663.4 569.9" stroke="#1a1a1a" stroke-width="1.3" opacity=".45" fill="none"/></g><polygon points="461.0,370.0 477.0,399.0 512.0,430.0 521.8,421.8" fill="#262626"/><clipPath id="cL"><polygon points="461.0,370.0 477.0,399.0 512.0,430.0 521.8,421.8" /></clipPath><g clip-path="url(#cL)" fill="none" stroke="#555" stroke-width="1.1" opacity=".55"><circle cx="470.0" cy="393.0" r="3.5"/><circle cx="470.0" cy="393.0" r="6.5"/><circle cx="470.0" cy="393.0" r="9.5"/><circle cx="477.2" cy="399.6" r="3.5"/><circle cx="477.2" cy="399.6" r="6.5"/><circle cx="477.2" cy="399.6" r="9.5"/><circle cx="484.4" cy="406.2" r="3.5"/><circle cx="484.4" cy="406.2" r="6.5"/><circle cx="484.4" cy="406.2" r="9.5"/><circle cx="491.6" cy="412.8" r="3.5"/><circle cx="491.6" cy="412.8" r="6.5"/><circle cx="491.6" cy="412.8" r="9.5"/><circle cx="498.8" cy="419.4" r="3.5"/><circle cx="498.8" cy="419.4" r="6.5"/><circle cx="498.8" cy="419.4" r="9.5"/><circle cx="506.0" cy="426.0" r="3.5"/><circle cx="506.0" cy="426.0" r="6.5"/><circle cx="506.0" cy="426.0" r="9.5"/><circle cx="513.2" cy="432.6" r="3.5"/><circle cx="513.2" cy="432.6" r="6.5"/><circle cx="513.2" cy="432.6" r="9.5"/></g><polygon points="554.8,453.6 511.0,491.5 509.8,498.5 549.8,466.0" fill="#505050"/><polygon points="476.0,459.5 511.0,491.5 509.8,498.5 493.0,482.8 478.6,465.0" fill="#1c1c1c"/><polygon points="934.5,126.9 934.5,131.5 920.0,146.5 919.6,141.5" fill="#333"/><g clip-path="url(#cT)"><polygon points="461.0,370.0 642.3,241.8 644.2,242.2 645.6,238.5 772.0,148.5 773.8,149.0 775.3,145.3 826.2,108.7 887.2,129.9 903.4,114.9 934.5,126.9 919.6,141.5 985.6,168.5 881.7,268.5 879.5,269.0 877.7,272.0 733.3,416.4 731.5,417.5 730.0,421.3 637.0,514.3 554.8,453.6 511.0,491.5 476.0,459.5 521.8,421.8" fill="#a6a6a6"/><path d="M461.0 370.0L637.0 514.0M466.9 365.8L643.0 508.1M472.7 361.6L648.9 502.2M478.5 357.5L654.7 496.4M484.3 353.4L660.5 490.7M489.9 349.3L666.2 485.1M495.5 345.3L671.8 479.5M501.1 341.3L677.4 474.0M506.6 337.4L682.9 468.5M512.0 333.5L688.3 463.2M517.4 329.6L693.7 457.8M522.8 325.8L699.0 452.6M528.1 322.0L704.2 447.4M533.3 318.3L709.4 442.2M538.5 314.6L714.5 437.2M543.6 310.9L719.6 432.1M548.7 307.2L724.6 427.2M553.8 303.6L729.6 422.3M558.8 300.1L734.5 417.4M563.7 296.5L739.3 412.6M568.6 293.0L744.1 407.8M573.5 289.5L748.9 403.1M578.3 286.1L753.6 398.5M461.0 370.0L580.7 284.4M465.0 373.3L584.7 287.0M469.0 376.6L588.8 289.6M473.1 379.9L592.9 292.2M477.2 383.3L597.1 294.9M481.3 386.6L601.3 297.5M485.5 390.1L605.5 300.2M489.7 393.5L609.8 302.9M494.0 397.0L614.1 305.7M498.3 400.5L618.4 308.4M502.6 404.1L622.7 311.2M507.0 407.6L627.1 314.0M511.4 411.2L631.6 316.9M515.9 414.9L636.1 319.7M520.4 418.6L640.6 322.6M524.9 422.3L645.1 325.5M529.5 426.0L649.7 328.4M534.1 429.8L654.3 331.4M538.8 433.7L659.0 334.3M543.5 437.5L663.7 337.4M548.3 441.4L668.4 340.4M553.1 445.4L673.2 343.4M558.0 449.3L678.1 346.5M562.9 453.3L682.9 349.6M567.8 457.4L687.8 352.8M572.8 461.5L692.8 355.9M577.9 465.6L697.8 359.1M583.0 469.8L702.9 362.3M588.1 474.0L707.9 365.6M593.3 478.3L713.1 368.9M598.6 482.6L718.3 372.2M603.9 486.9L723.5 375.5M609.3 491.3L728.8 378.9M614.7 495.8L734.1 382.3M620.2 500.3L739.5 385.7M625.7 504.8L744.9 389.2M631.3 509.4L750.4 392.6M637.0 514.0L755.9 396.2" stroke="#1c1c1c" stroke-width="0.52" fill="none"/><path d="M583.0 282.7L758.2 393.9M587.8 279.3L762.8 389.3M592.5 275.9L767.3 384.8M597.1 272.6L771.8 380.4M601.7 269.3L776.3 376.0M606.2 266.1L780.7 371.6M610.8 262.8L785.0 367.3M615.2 259.6L789.4 363.0M619.7 256.5L793.6 358.8M624.1 253.3L797.8 354.6M628.4 250.2L802.0 350.4M632.7 247.1L806.2 346.3M637.0 244.1L810.3 342.3M641.3 241.0L814.3 338.3M645.5 238.0L818.3 334.3M649.6 235.0L822.3 330.4M653.8 232.1L826.2 326.5M657.9 229.1L830.1 322.6M580.7 284.4L659.9 227.7M584.7 287.0L664.0 229.9M588.8 289.6L668.0 232.0M592.9 292.2L672.1 234.3M597.1 294.9L676.2 236.5M601.3 297.5L680.4 238.7M605.5 300.2L684.6 241.0M609.8 302.9L688.8 243.3M614.1 305.7L693.1 245.6M618.4 308.4L697.4 247.9M622.7 311.2L701.7 250.2M627.1 314.0L706.0 252.6M631.6 316.9L710.4 254.9M636.1 319.7L714.8 257.3M640.6 322.6L719.3 259.7M645.1 325.5L723.8 262.2M649.7 328.4L728.3 264.6M654.3 331.4L732.8 267.1M659.0 334.3L737.4 269.5M663.7 337.4L742.1 272.0M668.4 340.4L746.7 274.6M673.2 343.4L751.4 277.1M678.1 346.5L756.2 279.7M682.9 349.6L760.9 282.2M687.8 352.8L765.7 284.9M692.8 355.9L770.6 287.5M697.8 359.1L775.5 290.1M702.9 362.3L780.4 292.8M707.9 365.6L785.4 295.5M713.1 368.9L790.4 298.2M718.3 372.2L795.5 300.9M723.5 375.5L800.6 303.7M728.8 378.9L805.7 306.4M734.1 382.3L810.9 309.2M739.5 385.7L816.1 312.1M744.9 389.2L821.4 314.9M750.4 392.6L826.7 317.8M755.9 396.2L832.1 320.7" stroke="#1c1c1c" stroke-width="0.48" fill="none"/><path d="M662.0 226.2L834.0 318.8M666.0 223.3L837.8 315.0M670.0 220.5L841.6 311.2M673.9 217.6L845.3 307.5M677.9 214.8L849.0 303.8M681.8 212.0L852.7 300.2M685.6 209.3L856.3 296.6M689.5 206.5L860.0 293.0M693.3 203.8L863.5 289.5M697.0 201.1L867.1 286.0M700.8 198.4L870.6 282.5M704.5 195.8L874.0 279.1M708.2 193.1L877.5 275.7M711.8 190.5L880.9 272.3M715.5 187.9L884.3 268.9M719.0 185.4L887.6 265.6M722.6 182.8L890.9 262.3M726.2 180.3L894.2 259.1M659.9 227.7L727.9 179.0M664.0 229.9L731.9 180.9M668.0 232.0L735.9 182.8M672.1 234.3L739.9 184.6M676.2 236.5L744.0 186.5M680.4 238.7L748.1 188.5M684.6 241.0L752.2 190.4M688.8 243.3L756.4 192.3M693.1 245.6L760.5 194.3M697.4 247.9L764.7 196.2M701.7 250.2L769.0 198.2M706.0 252.6L773.2 200.2M710.4 254.9L777.5 202.2M714.8 257.3L781.9 204.2M719.3 259.7L786.2 206.3M723.8 262.2L790.6 208.3M728.3 264.6L795.0 210.4M732.8 267.1L799.5 212.5M737.4 269.5L804.0 214.6M742.1 272.0L808.5 216.7M746.7 274.6L813.0 218.8M751.4 277.1L817.6 220.9M756.2 279.7L822.2 223.1M760.9 282.2L826.9 225.3M765.7 284.9L831.6 227.5M770.6 287.5L836.3 229.7M775.5 290.1L841.1 231.9M780.4 292.8L845.9 234.1M785.4 295.5L850.7 236.4M790.4 298.2L855.6 238.7M795.5 300.9L860.5 240.9M800.6 303.7L865.4 243.2M805.7 306.4L870.4 245.6M810.9 309.2L875.4 247.9M816.1 312.1L880.4 250.3M821.4 314.9L885.5 252.7M826.7 317.8L890.7 255.1M832.1 320.7L895.8 257.5" stroke="#1c1c1c" stroke-width="0.44" fill="none"/><path d="M729.7 177.8L897.5 255.9M733.1 175.3L900.7 252.7M736.6 172.8L903.9 249.5M740.0 170.4L907.1 246.4M743.4 167.9L910.2 243.2M746.8 165.5L913.3 240.2M750.1 163.1L916.4 237.1M753.5 160.7L919.4 234.1M756.8 158.4L922.5 231.1M760.0 156.0L925.5 228.1M763.3 153.7L928.5 225.1M766.5 151.4L931.4 222.2M769.7 149.1L934.4 219.3M772.9 146.9L937.3 216.4M776.0 144.6L940.1 213.6M727.9 179.0L778.5 142.8M731.9 180.9L782.4 144.4M735.9 182.8L786.4 146.1M739.9 184.6L790.4 147.7M744.0 186.5L794.3 149.4M748.1 188.5L798.4 151.1M752.2 190.4L802.4 152.8M756.4 192.3L806.5 154.5M760.5 194.3L810.6 156.2M764.7 196.2L814.7 157.9M769.0 198.2L818.9 159.7M773.2 200.2L823.0 161.4M777.5 202.2L827.2 163.2M781.9 204.2L831.5 164.9M786.2 206.3L835.8 166.7M790.6 208.3L840.0 168.5M795.0 210.4L844.4 170.3M799.5 212.5L848.7 172.1M804.0 214.6L853.1 174.0M808.5 216.7L857.5 175.8M813.0 218.8L862.0 177.7M817.6 220.9L866.4 179.5M822.2 223.1L870.9 181.4M826.9 225.3L875.5 183.3M831.6 227.5L880.0 185.2M836.3 229.7L884.6 187.1M841.1 231.9L889.3 189.1M845.9 234.1L893.9 191.0M850.7 236.4L898.6 193.0M855.6 238.7L903.3 195.0M860.5 240.9L908.1 197.0M865.4 243.2L912.9 199.0M870.4 245.6L917.7 201.0M875.4 247.9L922.6 203.0M880.4 250.3L927.5 205.1M885.5 252.7L932.4 207.1M890.7 255.1L937.4 209.2M895.8 257.5L942.4 211.3" stroke="#1c1c1c" stroke-width="0.4" fill="none"/><path d="M779.2 142.4L943.0 210.7M782.3 140.1L945.8 207.9M785.3 137.9L948.6 205.1M788.4 135.7L951.4 202.4M791.4 133.6L954.2 199.6M794.4 131.4L956.9 196.9M797.4 129.3L959.6 194.2M800.4 127.2L962.3 191.6M803.4 125.0L965.0 188.9M806.3 122.9L967.6 186.3M809.2 120.9L970.3 183.7M812.1 118.8L972.9 181.1M814.9 116.8L975.5 178.5M817.8 114.7L978.0 176.0M820.6 112.7L980.6 173.5M823.4 110.7L983.1 171.0M826.2 108.7L985.6 168.5M778.5 142.8L826.2 108.7M782.4 144.4L830.0 110.1M786.4 146.1L833.9 111.6M790.4 147.7L837.8 113.0M794.3 149.4L841.7 114.5M798.4 151.1L845.6 116.0M802.4 152.8L849.6 117.5M806.5 154.5L853.6 119.0M810.6 156.2L857.6 120.5M814.7 157.9L861.6 122.0M818.9 159.7L865.7 123.5M823.0 161.4L869.7 125.0M827.2 163.2L873.8 126.6M831.5 164.9L878.0 128.1M835.8 166.7L882.1 129.7M840.0 168.5L886.3 131.3M844.4 170.3L890.5 132.8M848.7 172.1L894.8 134.4M853.1 174.0L899.0 136.0M857.5 175.8L903.3 137.6M862.0 177.7L907.6 139.3M866.4 179.5L912.0 140.9M870.9 181.4L916.4 142.5M875.5 183.3L920.8 144.2M880.0 185.2L925.2 145.8M884.6 187.1L929.7 147.5M889.3 189.1L934.2 149.2M893.9 191.0L938.7 150.9M898.6 193.0L943.2 152.6M903.3 195.0L947.8 154.3M908.1 197.0L952.4 156.1M912.9 199.0L957.1 157.8M917.7 201.0L961.7 159.6M922.6 203.0L966.5 161.3M927.5 205.1L971.2 163.1M932.4 207.1L976.0 164.9M937.4 209.2L980.8 166.7M942.4 211.3L985.6 168.5" stroke="#1c1c1c" stroke-width="0.36" fill="none"/><path d="M464.0 367.9L640.0 511.0M469.8 363.7L645.9 505.1M475.6 359.5L651.8 499.3M481.4 355.4L657.6 493.6M487.1 351.3L501.3 362.3M528.9 383.7L609.4 446.1M643.8 472.8L663.3 487.9M492.7 347.3L507.0 358.2M543.4 386.1L604.9 433.2M649.5 467.4L669.0 482.3M498.3 343.3L512.6 354.1M655.1 462.0L674.6 476.7M503.8 339.3L518.1 350.0M660.7 456.7L680.1 471.3M509.3 335.4L523.6 346.0M666.1 451.5L685.6 465.8M514.7 331.5L529.0 342.0M671.6 446.3L691.0 460.5M520.1 327.7L534.4 338.0M676.9 441.2L696.3 455.2M525.4 323.9L539.7 334.1M682.2 436.1L701.6 450.0M530.7 320.1L545.0 330.3M590.6 362.5L630.7 390.9M687.5 431.1L706.8 444.8M535.9 316.4L550.2 326.4M591.3 355.2L640.8 389.9M692.6 426.2L712.0 439.7M541.1 312.7L555.4 322.6M594.2 349.5L717.1 434.6M546.2 309.1L560.5 318.9M597.1 343.9L722.1 429.6M551.3 305.4L565.6 315.1M599.9 338.5L727.1 424.7M556.3 301.8L570.6 311.5M605.0 334.5L732.0 419.8M561.2 298.3L575.6 307.8M609.9 330.6L736.9 415.0M566.2 294.8L580.5 304.2M614.9 326.8L741.7 410.2M571.0 291.3L585.4 300.6M619.7 323.0L746.5 405.5M575.9 287.8L590.2 297.0M626.8 320.6L751.2 400.8M463.0 371.6L582.7 285.7M467.0 374.9L586.8 288.3M471.1 378.2L590.9 290.9M475.1 381.6L595.0 293.5M479.3 384.9L502.6 367.7M483.4 388.3L506.8 370.9M487.6 391.8L511.0 374.2M491.9 395.2L515.3 377.5M496.1 398.7L519.5 380.9M500.4 402.3L523.9 384.2M504.8 405.8L531.1 385.4M509.2 409.4L538.4 386.6M597.4 340.4L622.2 321.1M513.6 413.1L545.6 387.8M591.6 351.6L633.8 318.3M518.1 416.7L550.1 391.3M590.9 358.8L638.3 321.1M522.6 420.4L557.5 392.5M592.8 364.1L642.8 324.0M527.2 424.2L562.1 396.0M594.8 369.5L647.4 327.0M531.8 427.9L566.7 399.5M599.4 372.8L652.0 329.9M536.5 431.7L571.4 403.0M604.1 376.1L656.7 332.9M541.2 435.6L576.1 406.6M608.8 379.5L661.3 335.8M545.9 439.5L580.8 410.2M613.5 382.8L666.1 338.9M550.7 443.4L585.6 413.9M618.3 386.3L670.8 341.9M555.5 447.3L590.5 417.6M623.2 389.7L675.6 345.0M560.4 451.3L595.3 421.3M630.7 390.9L680.5 348.1M565.3 455.4L597.4 427.5M640.8 389.9L685.4 351.2M570.3 459.4L602.4 431.3M650.9 388.8L690.3 354.3M575.3 463.6L604.6 437.7M656.0 392.3L690.6 361.7M580.4 467.7L606.8 444.1M661.0 395.8L695.6 364.9M585.6 471.9L609.1 450.7M666.1 399.3L700.7 368.2M590.7 476.1L614.3 454.7M671.3 402.9L705.8 371.5M596.0 480.4L619.5 458.8M676.5 406.5L710.9 374.8M601.3 484.8L624.8 462.9M681.7 410.1L716.2 378.2M606.6 489.1L630.1 467.1M687.0 413.8L721.4 381.6M612.0 493.5L635.5 471.3M692.4 417.5L726.7 385.0M617.5 498.0L736.8 384.0M623.0 502.5L742.2 387.4M628.5 507.1L747.6 390.9M634.2 511.7L753.1 394.4" stroke="#1c1c1c" stroke-width="0.46" fill="none"/><path d="M580.7 284.4L595.0 293.5M633.8 318.3L690.3 354.3M736.8 384.0L755.9 396.2M585.4 281.0L599.8 290.0M643.0 317.4L690.1 347.1M741.4 379.5L760.5 391.6M590.1 277.6L604.5 286.6M652.3 316.5L689.9 340.0M746.0 375.1L765.1 387.1M594.8 274.3L609.1 283.2M750.6 370.8L769.6 382.6M599.4 271.0L613.7 279.8M755.1 366.5L774.1 378.2M604.0 267.7L618.3 276.4M759.5 362.2L778.5 373.8M608.5 264.5L622.8 273.1M763.9 358.0L782.9 369.4M613.0 261.2L627.3 269.8M672.8 296.9L710.1 319.1M768.3 353.9L787.2 365.1M617.5 258.1L631.8 266.5M672.7 290.7L721.7 319.7M772.6 349.7L791.5 360.9M621.9 254.9L636.2 263.3M672.6 284.6L728.5 317.3M776.9 345.6L795.7 356.7M626.2 251.8L735.2 315.0M781.1 341.6L799.9 352.5M630.6 248.7L742.0 312.7M785.3 337.6L804.1 348.4M634.9 245.6L746.2 309.0M789.5 333.6L808.2 344.3M639.2 242.5L750.3 305.3M793.6 329.7L812.3 340.3M643.4 239.5L754.5 301.7M797.6 325.8L816.3 336.3M647.6 236.5L758.6 298.1M801.7 322.0L820.3 332.3M651.7 233.5L760.2 293.2M805.6 318.2L824.3 328.4M655.8 230.6L764.2 289.6M809.6 314.4L828.2 324.5M582.7 285.7L661.9 228.8M586.8 288.3L666.0 230.9M590.9 290.9L670.1 233.2M595.0 293.5L674.2 235.4M644.7 262.5L674.3 240.6M648.9 264.9L678.4 242.9M653.1 267.4L682.6 245.2M657.4 269.8L686.9 247.5M661.7 272.3L691.1 249.8M666.0 274.8L695.4 252.2M670.4 277.4L699.8 254.5M674.8 279.9L704.2 256.9M672.7 287.6L710.6 257.7M638.3 321.1L643.0 317.4M672.7 293.8L717.0 258.5M642.8 324.0L652.3 316.5M675.0 298.2L721.5 260.9M647.4 327.0L659.1 317.5M677.3 302.7L726.0 263.4M652.0 329.9L663.7 320.3M681.9 305.5L730.5 265.8M656.7 332.9L668.4 323.2M686.6 308.3L735.1 268.3M661.3 335.8L673.1 326.1M691.2 311.1L739.7 270.8M666.1 338.9L677.8 329.1M695.9 313.9L744.4 273.3M670.8 341.9L682.5 332.0M700.7 316.7L749.1 275.8M675.6 345.0L687.3 335.0M707.7 317.7L753.8 278.4M680.5 348.1L689.9 340.0M714.7 318.7L758.5 281.0M685.4 351.2L690.1 347.1M721.7 319.7L763.3 283.5M733.1 316.9L764.2 289.6M736.8 384.0L813.5 310.7M742.2 387.4L818.7 313.5M747.6 390.9L824.0 316.3M753.1 394.4L829.4 319.2" stroke="#1c1c1c" stroke-width="0.41" fill="none"/><path d="M659.9 227.7L674.2 235.4M714.8 257.3L763.3 283.5M813.5 310.7L832.1 320.7M664.0 224.8L678.2 232.4M723.3 256.5L762.5 277.6M817.4 307.0L835.9 316.9M668.0 221.9L682.2 229.5M821.2 303.3L839.7 313.1M672.0 219.1L686.2 226.5M825.0 299.7L843.5 309.4M675.9 216.2L690.1 223.7M828.8 296.1L847.2 305.7M679.8 213.4L694.0 220.8M832.5 292.5L850.9 302.0M683.7 210.7L697.9 217.9M836.2 289.0L854.5 298.4M687.6 207.9L701.8 215.1M839.8 285.5L858.2 294.8M691.4 205.2L705.6 212.3M752.5 236.1L789.2 254.6M843.5 282.0L861.7 291.3M695.2 202.5L709.3 209.6M751.8 230.9L797.6 253.8M847.0 278.6L865.3 287.7M698.9 199.8L713.1 206.8M751.2 225.7L868.8 284.2M702.7 197.1L716.8 204.1M752.6 221.8L872.3 280.8M706.3 194.5L720.5 201.4M754.1 217.8L875.8 277.4M710.0 191.8L724.1 198.7M757.7 215.0L879.2 274.0M713.6 189.2L727.8 196.0M761.3 212.2L882.6 270.6M717.3 186.6L731.3 193.4M764.9 209.4L885.9 267.3M720.8 184.1L734.9 190.8M768.4 206.7L889.3 264.0M724.4 181.5L738.5 188.2M774.1 204.9L892.6 260.7M661.9 228.8L729.9 180.0M666.0 230.9L733.9 181.8M670.1 233.2L737.9 183.7M674.2 235.4L742.0 185.6M754.1 217.8L768.4 206.7M751.2 225.7L779.7 203.2M717.0 258.5L719.0 256.9M751.8 230.9L784.0 205.2M721.5 260.9L725.5 257.7M752.5 236.1L788.4 207.3M726.0 263.4L732.0 258.5M755.1 239.8L792.8 209.3M730.5 265.8L736.5 261.0M759.6 242.1L797.3 211.4M735.1 268.3L741.1 263.4M764.2 244.4L801.7 213.5M739.7 270.8L745.7 265.9M768.7 246.7L806.2 215.6M744.4 273.3L750.3 268.3M773.3 249.1L810.8 217.7M749.1 275.8L755.0 270.8M778.0 251.4L815.3 219.9M753.8 278.4L759.7 273.3M782.6 253.8L819.9 222.0M758.5 281.0L762.5 277.6M789.2 254.6L824.6 224.2M797.6 253.8L829.2 226.4M806.0 253.0L833.9 228.6M810.8 255.4L835.3 233.8M815.7 257.8L840.1 236.0M820.5 260.2L844.9 238.3M825.4 262.7L849.8 240.6M830.4 265.1L854.7 242.9M835.4 267.6L859.6 245.2M840.4 270.1L864.6 247.5M845.5 272.6L869.6 249.9M813.5 310.7L877.9 249.1M818.7 313.5L883.0 251.5M824.0 316.3L888.1 253.8M829.4 319.2L893.2 256.3" stroke="#1c1c1c" stroke-width="0.36" fill="none"/><path d="M727.9 179.0L742.0 185.6M779.7 203.2L833.9 228.6M877.9 249.1L895.8 257.5M731.4 176.5L745.4 183.0M787.5 202.5L832.6 223.4M881.2 246.0L899.1 254.3M734.9 174.0L748.9 180.5M795.2 201.8L831.3 218.4M884.4 242.9L902.3 251.1M738.3 171.6L752.3 178.0M814.1 206.2L905.5 247.9M741.7 169.1L755.7 175.5M817.4 203.5L908.6 244.8M745.1 166.7L759.1 173.0M894.0 233.7L911.8 241.7M748.5 164.3L762.4 170.6M897.1 230.7L914.9 238.6M751.8 161.9L765.8 168.1M809.6 187.6L845.3 203.4M900.2 227.7L917.9 235.6M755.1 159.6L769.1 165.7M808.6 183.1L853.1 202.7M903.3 224.8L921.0 232.6M758.4 157.2L772.3 163.3M807.5 178.7L860.8 202.0M906.4 221.9L924.0 229.6M761.7 154.9L866.3 200.3M909.4 219.0L927.0 226.6M764.9 152.6L869.3 197.6M912.4 216.1L929.9 223.7M768.1 150.3L872.4 194.9M915.4 213.3L932.9 220.7M771.3 148.0L875.4 192.2M918.4 210.4L935.8 217.9M774.5 145.7L878.5 189.6M921.3 207.6L938.7 215.0M777.6 143.5L881.4 187.0M924.2 204.9L941.6 212.1M729.9 180.0L780.5 143.6M733.9 181.8L784.4 145.3M737.9 183.7L788.4 146.9M742.0 185.6L792.3 148.6M779.6 162.7L796.4 150.3M783.7 164.4L800.4 151.9M787.7 166.2L804.4 153.6M791.9 168.0L808.5 155.3M796.0 169.8L812.6 157.1M800.2 171.6L816.8 158.8M804.4 173.4L820.9 160.5M807.0 176.5L825.1 162.3M808.0 180.9L829.4 164.1M784.0 205.2L787.5 202.5M809.1 185.3L833.6 165.8M788.4 207.3L795.2 201.8M811.8 188.5L837.9 167.6M792.8 209.3L801.3 202.5M814.6 191.8L842.2 169.4M797.3 211.4L805.7 204.5M818.9 193.7L846.5 171.2M801.7 213.5L810.2 206.5M823.4 195.7L850.9 173.1M806.2 215.6L819.7 204.5M827.8 197.7L855.3 174.9M810.8 217.7L819.2 210.7M820.9 209.3L824.2 206.5M832.3 199.7L859.7 176.7M815.3 219.9L823.7 212.8M825.4 211.4L828.7 208.6M836.8 201.7L864.2 178.6M819.9 222.0L828.3 214.9M830.0 213.4L833.3 210.6M843.0 202.4L868.7 180.5M824.6 224.2L831.3 218.4M834.6 215.6L837.9 212.7M849.2 203.0L873.2 182.4M829.2 226.4L832.6 223.4M839.2 217.7L842.5 214.8M856.9 202.3L877.7 184.3M843.9 219.8L847.2 216.9M864.7 201.6L882.3 186.2M848.6 222.0L851.9 219.1M853.4 224.1L856.6 221.2M858.2 226.3L861.4 223.4M863.0 228.5L866.2 225.6M867.9 230.7L871.1 227.8M872.7 233.0L876.0 230.0M877.7 235.2L880.9 232.2M882.6 237.5L885.8 234.5M877.9 249.1L925.0 204.0M883.0 251.5L930.0 206.1M888.1 253.8L934.9 208.2M893.2 256.3L939.9 210.2" stroke="#1c1c1c" stroke-width="0.31" fill="none"/><path d="M780.7 141.2L884.4 184.4M927.1 202.1L944.4 209.3M783.8 139.0L885.0 180.9M929.9 199.4L947.2 206.5M786.9 136.8L800.6 142.5M837.5 157.6L883.4 176.4M932.8 196.7L950.0 203.8M789.9 134.7L803.7 140.3M846.9 157.9L881.8 172.1M935.6 194.0L952.8 201.0M792.9 132.5L806.7 138.1M938.3 191.3L955.5 198.3M795.9 130.3L809.7 135.9M941.1 188.7L958.3 195.6M798.9 128.2L812.6 133.7M943.9 186.1L961.0 192.9M801.9 126.1L815.6 131.5M946.6 183.5L963.7 190.2M804.8 124.0L818.5 129.4M949.3 180.9L966.3 187.6M807.7 121.9L821.4 127.2M951.9 178.3L969.0 185.0M810.6 119.8L824.3 125.1M856.6 137.7L917.3 161.3M954.6 175.8L971.6 182.4M813.5 117.8L827.1 123.0M851.2 132.3L929.1 162.4M957.2 173.3L974.2 179.8M816.4 115.7L976.7 177.3M819.2 113.7L979.3 174.7M822.0 111.7L981.8 172.2M824.8 109.7L984.4 169.7M780.5 143.6L828.1 109.4M784.4 145.3L832.0 110.9M788.4 146.9L835.8 112.3M792.3 148.6L839.7 113.8M796.4 150.3L801.6 146.4M832.5 123.5L843.7 115.2M800.4 151.9L805.6 148.0M836.5 125.0L847.6 116.7M804.4 153.6L809.7 149.7M840.4 126.6L851.6 118.2M808.5 155.3L813.7 151.4M844.5 128.1L855.6 119.7M812.6 157.1L817.8 153.1M848.5 129.7L859.6 121.2M816.8 158.8L822.0 154.8M851.2 132.3L863.6 122.7M820.9 160.5L826.1 156.5M853.9 135.0L867.7 124.3M825.1 162.3L830.3 158.2M856.6 137.7L871.8 125.8M829.4 164.1L837.5 157.6M860.7 139.3L875.9 127.3M833.6 165.8L843.2 158.2M863.5 142.1L880.0 128.9M837.9 167.6L850.5 157.5M867.7 143.7L884.2 130.5M842.2 169.4L854.7 159.3M872.0 145.4L888.4 132.0M846.5 171.2L859.0 161.0M876.2 147.0L892.6 133.6M850.9 173.1L863.4 162.8M880.5 148.7L896.9 135.2M855.3 174.9L867.8 164.6M884.8 150.4L901.2 136.8M859.7 176.7L872.1 166.3M889.2 152.1L905.5 138.4M864.2 178.6L876.6 168.1M893.6 153.8L909.8 140.1M868.7 180.5L879.6 171.2M898.0 155.5L914.2 141.7M873.2 182.4L882.6 174.3M902.4 157.2L918.6 143.4M877.7 184.3L884.2 178.6M906.9 159.0L923.0 145.0M882.3 186.2L885.9 183.1M912.8 159.5L927.4 146.7M917.3 161.3L931.9 148.4M923.2 161.9L936.4 150.1M929.1 162.4L941.0 151.8M935.0 163.0L945.5 153.5M939.7 164.8L950.1 155.2M944.3 166.6L954.7 156.9M949.0 168.4L959.4 158.7M953.8 170.2L964.1 160.4M925.0 204.0L968.8 162.2M930.0 206.1L973.6 164.0M934.9 208.2L978.4 165.8M939.9 210.2L983.2 167.6" stroke="#1c1c1c" stroke-width="0.26" fill="none"/><g clip-path="url(#cF)"><polygon points="390.3,415.8 852.3,87.1 1015.0,144.1 571.7,586.9" fill="#8e8e8e"/><path d="M403.6 408.7L581.8 572.7M405.2 407.6L583.5 571.1M406.8 406.4L585.2 569.4M408.4 405.3L586.9 567.7M410.1 404.1L588.5 566.1M411.7 403.0L590.2 564.4M413.3 401.8L591.8 562.8M414.9 400.7L593.5 561.1M416.5 399.5L595.1 559.5M418.1 398.4L596.8 557.9M419.7 397.3L598.4 556.2M421.2 396.1L600.0 554.6M422.8 395.0L601.6 553.0M424.4 393.9L603.3 551.4M426.0 392.7L604.9 549.8M427.5 391.6L606.5 548.2M429.1 390.5L608.1 546.6M430.7 389.4L609.7 545.0M432.2 388.3L611.3 543.4M433.8 387.2L612.9 541.8M435.3 386.1L614.5 540.3M436.9 385.0L616.0 538.7M438.4 383.9L617.6 537.1M439.9 382.8L619.2 535.6M441.5 381.7L620.7 534.0M443.0 380.6L622.3 532.5M444.5 379.5L623.8 530.9M446.0 378.4L625.4 529.4M447.5 377.3L626.9 527.8M449.1 376.3L628.5 526.3M450.6 375.2L630.0 524.8M452.1 374.1L631.5 523.3M453.6 373.1L633.1 521.7M455.1 372.0L634.6 520.2M456.6 370.9L636.1 518.7M458.0 369.9L637.6 517.2M459.5 368.8L639.1 515.7M461.0 367.7L640.6 514.2M462.5 366.7L642.1 512.7M464.0 365.6L643.6 511.3M465.4 364.6L645.1 509.8M466.9 363.5L646.6 508.3M468.4 362.5L648.0 506.8M469.8 361.5L649.5 505.4M471.3 360.4L651.0 503.9M472.7 359.4L652.5 502.4M474.2 358.4L653.9 501.0M475.6 357.3L655.4 499.5M477.1 356.3L656.8 498.1M478.5 355.3L658.3 496.7M479.9 354.2L659.7 495.2M481.4 353.2L661.1 493.8M482.8 352.2L662.6 492.4M484.2 351.2L664.0 490.9M485.6 350.2L665.4 489.5M487.0 349.2L666.9 488.1M488.4 348.2L668.3 486.7M489.9 347.2L669.7 485.3M491.3 346.2L671.1 483.9M492.7 345.2L672.5 482.5M494.1 344.2L673.9 481.1M495.4 343.2L675.3 479.7M496.8 342.2L676.7 478.3M498.2 341.2L678.1 477.0M499.6 340.2L679.5 475.6M501.0 339.2L680.8 474.2M502.4 338.2L682.2 472.8M503.7 337.3L683.6 471.5M505.1 336.3L685.0 470.1M506.5 335.3L686.3 468.8M507.8 334.3L687.7 467.4M509.2 333.4L689.0 466.1M510.6 332.4L690.4 464.7M511.9 331.4L691.7 463.4M513.3 330.5L693.1 462.0M514.6 329.5L694.4 460.7M515.9 328.5L695.8 459.4M517.3 327.6L697.1 458.0M518.6 326.6L698.4 456.7M520.0 325.7L699.7 455.4M521.3 324.7L701.1 454.1M522.6 323.8L702.4 452.8M523.9 322.8L703.7 451.5M525.3 321.9L705.0 450.2M526.6 321.0L706.3 448.9M527.9 320.0L707.6 447.6M529.2 319.1L708.9 446.3M530.5 318.1L710.2 445.0M531.8 317.2L711.5 443.7M533.1 316.3L712.8 442.4M534.4 315.4L714.1 441.2M535.7 314.4L715.3 439.9M537.0 313.5L716.6 438.6M538.3 312.6L717.9 437.3M539.6 311.7L719.2 436.1M540.9 310.8L720.4 434.8M542.1 309.8L721.7 433.6M543.4 308.9L722.9 432.3M544.7 308.0L724.2 431.1M546.0 307.1L725.4 429.8M547.2 306.2L726.7 428.6M548.5 305.3L727.9 427.3M549.8 304.4L729.2 426.1M551.0 303.5L730.4 424.9M552.3 302.6L731.6 423.6M553.5 301.7L732.9 422.4M554.8 300.8L734.1 421.2M556.0 299.9L735.3 420.0M557.3 299.1L736.5 418.8M558.5 298.2L737.8 417.6M559.7 297.3L739.0 416.4M561.0 296.4L740.2 415.2M562.2 295.5L741.4 414.0M563.4 294.6L742.6 412.8M564.7 293.8L743.8 411.6M565.9 292.9L745.0 410.4M567.1 292.0L746.2 409.2M568.3 291.2L747.4 408.0M569.6 290.3L748.6 406.8M570.8 289.4L749.7 405.6M572.0 288.6L750.9 404.5M573.2 287.7L752.1 403.3M574.4 286.8L753.3 402.1M575.6 286.0L754.5 401.0M576.8 285.1L755.6 399.8M578.0 284.3L756.8 398.6M404.0 409.2L579.7 283.7M405.0 410.1L580.7 284.4M406.0 411.0L581.7 285.0M407.0 411.9L582.7 285.7M408.0 412.8L583.7 286.3M408.9 413.7L584.7 287.0M409.9 414.6L585.7 287.6M410.9 415.5L586.8 288.3M411.9 416.4L587.8 288.9M412.9 417.3L588.8 289.6M413.9 418.2L589.8 290.2M414.9 419.2L590.9 290.9M415.9 420.1L591.9 291.5M416.9 421.0L592.9 292.2M417.9 421.9L594.0 292.9M418.9 422.9L595.0 293.5M419.9 423.8L596.1 294.2M421.0 424.7L597.1 294.9M422.0 425.7L598.1 295.5M423.0 426.6L599.2 296.2M424.0 427.5L600.2 296.9M425.0 428.5L601.3 297.5M426.1 429.4L602.3 298.2M427.1 430.4L603.4 298.9M428.1 431.3L604.4 299.5M429.2 432.3L605.5 300.2M430.2 433.2L606.6 300.9M431.2 434.2L607.6 301.6M432.3 435.1L608.7 302.3M433.3 436.1L609.8 302.9M434.4 437.1L610.8 303.6M435.4 438.0L611.9 304.3M436.5 439.0L613.0 305.0M437.5 440.0L614.1 305.7M438.6 440.9L615.1 306.4M439.6 441.9L616.2 307.1M440.7 442.9L617.3 307.7M441.7 443.9L618.4 308.4M442.8 444.8L619.5 309.1M443.9 445.8L620.6 309.8M445.0 446.8L621.7 310.5M446.0 447.8L622.7 311.2M447.1 448.8L623.8 311.9M448.2 449.8L624.9 312.6M449.3 450.8L626.0 313.3M450.3 451.8L627.1 314.0M451.4 452.8L628.2 314.7M452.5 453.8L629.4 315.4M453.6 454.8L630.5 316.1M454.7 455.8L631.6 316.9M455.8 456.8L632.7 317.6M456.9 457.8L633.8 318.3M458.0 458.8L634.9 319.0M459.1 459.8L636.1 319.7M460.2 460.9L637.2 320.4M461.3 461.9L638.3 321.1M462.5 462.9L639.4 321.9M463.6 463.9L640.6 322.6M464.7 465.0L641.7 323.3M465.8 466.0L642.8 324.0M466.9 467.0L644.0 324.8M468.1 468.1L645.1 325.5M469.2 469.1L646.3 326.2M470.3 470.2L647.4 327.0M471.5 471.2L648.5 327.7M472.6 472.2L649.7 328.4M473.8 473.3L650.9 329.2M474.9 474.4L652.0 329.9M476.0 475.4L653.2 330.6M477.2 476.5L654.3 331.4M478.3 477.5L655.5 332.1M479.5 478.6L656.7 332.9M480.7 479.7L657.8 333.6M481.8 480.7L659.0 334.3M483.0 481.8L660.2 335.1M484.2 482.9L661.3 335.8M485.3 484.0L662.5 336.6M486.5 485.0L663.7 337.4M487.7 486.1L664.9 338.1M488.9 487.2L666.1 338.9M490.0 488.3L667.3 339.6M491.2 489.4L668.4 340.4M492.4 490.5L669.6 341.1M493.6 491.6L670.8 341.9M494.8 492.7L672.0 342.7M496.0 493.8L673.2 343.4M497.2 494.9L674.4 344.2M498.4 496.0L675.6 345.0M499.6 497.1L676.9 345.7M500.8 498.2L678.1 346.5M502.1 499.3L679.3 347.3M503.3 500.5L680.5 348.1M504.5 501.6L681.7 348.8M505.7 502.7L682.9 349.6M506.9 503.8L684.2 350.4M508.2 505.0L685.4 351.2M509.4 506.1L686.6 352.0M510.6 507.2L687.8 352.8M511.9 508.4L689.1 353.5M513.1 509.5L690.3 354.3M514.4 510.7L691.6 355.1M515.6 511.8L692.8 355.9M516.9 513.0L694.1 356.7M518.1 514.1L695.3 357.5M519.4 515.3L696.6 358.3M520.6 516.4L697.8 359.1M521.9 517.6L699.1 359.9M523.2 518.8L700.3 360.7M524.5 519.9L701.6 361.5M525.7 521.1L702.9 362.3M527.0 522.3L704.1 363.1M528.3 523.5L705.4 364.0M529.6 524.7L706.7 364.8M530.9 525.9L707.9 365.6M532.2 527.0L709.2 366.4M533.5 528.2L710.5 367.2M534.8 529.4L711.8 368.0M536.1 530.6L713.1 368.9M537.4 531.8L714.4 369.7M538.7 533.0L715.7 370.5M540.0 534.2L717.0 371.3M541.3 535.5L718.3 372.2M542.6 536.7L719.6 373.0M544.0 537.9L720.9 373.8M545.3 539.1L722.2 374.7M546.6 540.3L723.5 375.5M548.0 541.6L724.8 376.3M549.3 542.8L726.1 377.2M550.6 544.0L727.4 378.0M552.0 545.3L728.8 378.9M553.3 546.5L730.1 379.7M554.7 547.8L731.4 380.6M556.0 549.0L732.8 381.4M557.4 550.3L734.1 382.3M558.8 551.5L735.4 383.1M560.1 552.8L736.8 384.0M561.5 554.0L738.1 384.8M562.9 555.3L739.5 385.7M564.3 556.6L740.8 386.6M565.7 557.9L742.2 387.4M567.0 559.1L743.5 388.3M568.4 560.4L744.9 389.2M569.8 561.7L746.3 390.0M571.2 563.0L747.6 390.9M572.6 564.3L749.0 391.8M574.0 565.6L750.4 392.6M575.5 566.9L751.7 393.5M576.9 568.2L753.1 394.4M578.3 569.5L754.5 395.3M579.7 570.8L755.9 396.2M581.1 572.1L757.3 397.1" stroke="#222" stroke-width="0.42" opacity="0.8" fill="none"/><path d="M579.2 283.4L757.9 397.5M580.4 282.6L759.1 396.3M581.6 281.7L760.3 395.2M582.7 280.9L761.4 394.0M583.9 280.0L762.6 392.9M585.1 279.2L763.7 391.8M586.3 278.4L764.8 390.6M587.5 277.5L766.0 389.5M588.6 276.7L767.1 388.3M589.8 275.8L768.3 387.2M591.0 275.0L769.4 386.1M592.1 274.2L770.5 385.0M593.3 273.4L771.6 383.9M594.4 272.5L772.8 382.7M595.6 271.7L773.9 381.6M596.8 270.9L775.0 380.5M597.9 270.1L776.1 379.4M599.1 269.2L777.2 378.3M600.2 268.4L778.3 377.2M601.3 267.6L779.4 376.1M602.5 266.8L780.5 375.0M603.6 266.0L781.6 373.9M604.8 265.2L782.7 372.8M605.9 264.4L783.8 371.7M607.0 263.6L784.9 370.7M608.1 262.8L786.0 369.6M609.3 262.0L787.1 368.5M610.4 261.2L788.2 367.4M611.5 260.4L789.2 366.3M612.6 259.6L790.3 365.3M613.7 258.8L791.4 364.2M614.9 258.0L792.5 363.1M616.0 257.2L793.5 362.1M617.1 256.4L794.6 361.0M618.2 255.6L795.6 360.0M619.3 254.8L796.7 358.9M620.4 254.0L797.8 357.9M621.5 253.2L798.8 356.8M622.6 252.5L799.9 355.8M623.7 251.7L800.9 354.7M624.8 250.9L802.0 353.7M625.8 250.1L803.0 352.6M626.9 249.3L804.0 351.6M628.0 248.6L805.1 350.6M629.1 247.8L806.1 349.6M630.2 247.0L807.1 348.5M631.3 246.3L808.2 347.5M632.3 245.5L809.2 346.5M633.4 244.7L810.2 345.5M634.5 244.0L811.2 344.4M635.5 243.2L812.3 343.4M636.6 242.5L813.3 342.4M637.7 241.7L814.3 341.4M638.7 240.9L815.3 340.4M639.8 240.2L816.3 339.4M640.8 239.4L817.3 338.4M641.9 238.7L818.3 337.4M642.9 237.9L819.3 336.4M644.0 237.2L820.3 335.4M645.0 236.4L821.3 334.4M646.1 235.7L822.3 333.4M647.1 234.9L823.3 332.4M648.2 234.2L824.3 331.5M649.2 233.5L825.3 330.5M650.2 232.7L826.3 329.5M651.3 232.0L827.2 328.5M652.3 231.2L828.2 327.6M653.3 230.5L829.2 326.6M654.4 229.8L830.2 325.6M655.4 229.1L831.1 324.6M656.4 228.3L832.1 323.7M657.4 227.6L833.1 322.7M579.7 283.7L658.9 227.1M580.7 284.4L659.9 227.7M581.7 285.0L660.9 228.2M582.7 285.7L661.9 228.8M583.7 286.3L662.9 229.3M584.7 287.0L664.0 229.9M585.7 287.6L665.0 230.4M586.8 288.3L666.0 230.9M587.8 288.9L667.0 231.5M588.8 289.6L668.0 232.0M589.8 290.2L669.0 232.6M590.9 290.9L670.1 233.2M591.9 291.5L671.1 233.7M592.9 292.2L672.1 234.3M594.0 292.9L673.2 234.8M595.0 293.5L674.2 235.4M596.1 294.2L675.2 235.9M597.1 294.9L676.2 236.5M598.1 295.5L677.3 237.1M599.2 296.2L678.3 237.6M600.2 296.9L679.4 238.2M601.3 297.5L680.4 238.7M602.3 298.2L681.5 239.3M603.4 298.9L682.5 239.9M604.4 299.5L683.5 240.4M605.5 300.2L684.6 241.0M606.6 300.9L685.6 241.6M607.6 301.6L686.7 242.1M608.7 302.3L687.8 242.7M609.8 302.9L688.8 243.3M610.8 303.6L689.9 243.9M611.9 304.3L690.9 244.4M613.0 305.0L692.0 245.0M614.1 305.7L693.1 245.6M615.1 306.4L694.1 246.2M616.2 307.1L695.2 246.7M617.3 307.7L696.3 247.3M618.4 308.4L697.4 247.9M619.5 309.1L698.4 248.5M620.6 309.8L699.5 249.1M621.7 310.5L700.6 249.6M622.7 311.2L701.7 250.2M623.8 311.9L702.8 250.8M624.9 312.6L703.8 251.4M626.0 313.3L704.9 252.0M627.1 314.0L706.0 252.6M628.2 314.7L707.1 253.2M629.4 315.4L708.2 253.8M630.5 316.1L709.3 254.4M631.6 316.9L710.4 254.9M632.7 317.6L711.5 255.5M633.8 318.3L712.6 256.1M634.9 319.0L713.7 256.7M636.1 319.7L714.8 257.3M637.2 320.4L715.9 257.9M638.3 321.1L717.0 258.5M639.4 321.9L718.2 259.1M640.6 322.6L719.3 259.7M641.7 323.3L720.4 260.3M642.8 324.0L721.5 260.9M644.0 324.8L722.6 261.6M645.1 325.5L723.8 262.2M646.3 326.2L724.9 262.8M647.4 327.0L726.0 263.4M648.5 327.7L727.1 264.0M649.7 328.4L728.3 264.6M650.9 329.2L729.4 265.2M652.0 329.9L730.5 265.8M653.2 330.6L731.7 266.4M654.3 331.4L732.8 267.1M655.5 332.1L734.0 267.7M656.7 332.9L735.1 268.3M657.8 333.6L736.3 268.9M659.0 334.3L737.4 269.5M660.2 335.1L738.6 270.2M661.3 335.8L739.7 270.8M662.5 336.6L740.9 271.4M663.7 337.4L742.1 272.0M664.9 338.1L743.2 272.7M666.1 338.9L744.4 273.3M667.3 339.6L745.5 273.9M668.4 340.4L746.7 274.6M669.6 341.1L747.9 275.2M670.8 341.9L749.1 275.8M672.0 342.7L750.2 276.5M673.2 343.4L751.4 277.1M674.4 344.2L752.6 277.7M675.6 345.0L753.8 278.4M676.9 345.7L755.0 279.0M678.1 346.5L756.2 279.7M679.3 347.3L757.3 280.3M680.5 348.1L758.5 281.0M681.7 348.8L759.7 281.6M682.9 349.6L760.9 282.2M684.2 350.4L762.1 282.9M685.4 351.2L763.3 283.5M686.6 352.0L764.5 284.2M687.8 352.8L765.7 284.9M689.1 353.5L767.0 285.5M690.3 354.3L768.2 286.2M691.6 355.1L769.4 286.8M692.8 355.9L770.6 287.5M694.1 356.7L771.8 288.1M695.3 357.5L773.0 288.8M696.6 358.3L774.3 289.5M697.8 359.1L775.5 290.1M699.1 359.9L776.7 290.8M700.3 360.7L778.0 291.4M701.6 361.5L779.2 292.1M702.9 362.3L780.4 292.8M704.1 363.1L781.7 293.5M705.4 364.0L782.9 294.1M706.7 364.8L784.2 294.8M707.9 365.6L785.4 295.5M709.2 366.4L786.6 296.1M710.5 367.2L787.9 296.8M711.8 368.0L789.2 297.5M713.1 368.9L790.4 298.2M714.4 369.7L791.7 298.9M715.7 370.5L792.9 299.5M717.0 371.3L794.2 300.2M718.3 372.2L795.5 300.9M719.6 373.0L796.7 301.6M720.9 373.8L798.0 302.3M722.2 374.7L799.3 303.0M723.5 375.5L800.6 303.7M724.8 376.3L801.8 304.4M726.1 377.2L803.1 305.1M727.4 378.0L804.4 305.7M728.8 378.9L805.7 306.4M730.1 379.7L807.0 307.1M731.4 380.6L808.3 307.8M732.8 381.4L809.6 308.5M734.1 382.3L810.9 309.2M735.4 383.1L812.2 309.9M736.8 384.0L813.5 310.7M738.1 384.8L814.8 311.4M739.5 385.7L816.1 312.1M740.8 386.6L817.4 312.8M742.2 387.4L818.7 313.5M743.5 388.3L820.1 314.2M744.9 389.2L821.4 314.9M746.3 390.0L822.7 315.6M747.6 390.9L824.0 316.3M749.0 391.8L825.4 317.1M750.4 392.6L826.7 317.8M751.7 393.5L828.0 318.5M753.1 394.4L829.4 319.2M754.5 395.3L830.7 320.0M755.9 396.2L832.1 320.7M757.3 397.1L833.4 321.4" stroke="#222" stroke-width="0.38" opacity="0.72" fill="none"/><path d="M658.4 226.9L834.0 321.8M659.5 226.1L835.0 320.8M660.5 225.4L836.0 319.8M661.5 224.7L836.9 318.9M662.5 224.0L837.9 317.9M663.5 223.3L838.8 317.0M664.5 222.5L839.8 316.0M665.5 221.8L840.7 315.1M666.5 221.1L841.7 314.2M667.5 220.4L842.6 313.2M668.5 219.7L843.6 312.3M669.5 219.0L844.5 311.4M670.5 218.3L845.4 310.4M671.5 217.6L846.4 309.5M672.5 216.9L847.3 308.6M673.4 216.2L848.2 307.6M674.4 215.5L849.2 306.7M675.4 214.8L850.1 305.8M676.4 214.1L851.0 304.9M677.4 213.4L851.9 304.0M678.3 212.7L852.9 303.0M679.3 212.0L853.8 302.1M680.3 211.3L854.7 301.2M681.3 210.6L855.6 300.3M682.2 209.9L856.5 299.4M683.2 209.2L857.4 298.5M684.2 208.5L858.3 297.6M685.1 207.8L859.2 296.7M686.1 207.1L860.1 295.8M687.0 206.5L861.0 294.9M688.0 205.8L861.9 294.0M688.9 205.1L862.8 293.1M689.9 204.4L863.7 292.2M690.9 203.7L864.6 291.4M691.8 203.1L865.5 290.5M692.7 202.4L866.4 289.6M693.7 201.7L867.3 288.7M694.6 201.0L868.1 287.8M695.6 200.4L869.0 287.0M696.5 199.7L869.9 286.1M697.4 199.0L870.8 285.2M698.4 198.4L871.6 284.3M699.3 197.7L872.5 283.5M700.2 197.0L873.4 282.6M701.2 196.4L874.3 281.8M702.1 195.7L875.1 280.9M703.0 195.1L876.0 280.0M704.0 194.4L876.8 279.2M704.9 193.7L877.7 278.3M705.8 193.1L878.6 277.5M706.7 192.4L879.4 276.6M707.6 191.8L880.3 275.8M708.5 191.1L881.1 274.9M709.5 190.5L882.0 274.1M710.4 189.8L882.8 273.2M711.3 189.2L883.7 272.4M712.2 188.5L884.5 271.5M713.1 187.9L885.4 270.7M714.0 187.2L886.2 269.9M714.9 186.6L887.0 269.0M715.8 185.9L887.9 268.2M716.7 185.3L888.7 267.4M717.6 184.7L889.5 266.5M718.5 184.0L890.4 265.7M719.4 183.4L891.2 264.9M720.3 182.8L892.0 264.1M721.1 182.1L892.8 263.3M722.0 181.5L893.7 262.4M722.9 180.9L894.5 261.6M723.8 180.2L895.3 260.8M724.7 179.6L896.1 260.0M725.6 179.0L896.9 259.2M658.9 227.1L726.9 178.6M659.9 227.7L727.9 179.0M660.9 228.2L728.9 179.5M661.9 228.8L729.9 180.0M662.9 229.3L730.9 180.4M664.0 229.9L731.9 180.9M665.0 230.4L732.9 181.4M666.0 230.9L733.9 181.8M667.0 231.5L734.9 182.3M668.0 232.0L735.9 182.8M669.0 232.6L736.9 183.2M670.1 233.2L737.9 183.7M671.1 233.7L738.9 184.2M672.1 234.3L739.9 184.6M673.2 234.8L740.9 185.1M674.2 235.4L742.0 185.6M675.2 235.9L743.0 186.1M676.2 236.5L744.0 186.5M677.3 237.1L745.0 187.0M678.3 237.6L746.0 187.5M679.4 238.2L747.1 188.0M680.4 238.7L748.1 188.5M681.5 239.3L749.1 188.9M682.5 239.9L750.1 189.4M683.5 240.4L751.2 189.9M684.6 241.0L752.2 190.4M685.6 241.6L753.2 190.9M686.7 242.1L754.3 191.3M687.8 242.7L755.3 191.8M688.8 243.3L756.4 192.3M689.9 243.9L757.4 192.8M690.9 244.4L758.4 193.3M692.0 245.0L759.5 193.8M693.1 245.6L760.5 194.3M694.1 246.2L761.6 194.8M695.2 246.7L762.6 195.2M696.3 247.3L763.7 195.7M697.4 247.9L764.7 196.2M698.4 248.5L765.8 196.7M699.5 249.1L766.9 197.2M700.6 249.6L767.9 197.7M701.7 250.2L769.0 198.2M702.8 250.8L770.0 198.7M703.8 251.4L771.1 199.2M704.9 252.0L772.2 199.7M706.0 252.6L773.2 200.2M707.1 253.2L774.3 200.7M708.2 253.8L775.4 201.2M709.3 254.4L776.5 201.7M710.4 254.9L777.5 202.2M711.5 255.5L778.6 202.7M712.6 256.1L779.7 203.2M713.7 256.7L780.8 203.7M714.8 257.3L781.9 204.2M715.9 257.9L783.0 204.7M717.0 258.5L784.0 205.2M718.2 259.1L785.1 205.8M719.3 259.7L786.2 206.3M720.4 260.3L787.3 206.8M721.5 260.9L788.4 207.3M722.6 261.6L789.5 207.8M723.8 262.2L790.6 208.3M724.9 262.8L791.7 208.8M726.0 263.4L792.8 209.3M727.1 264.0L793.9 209.9M728.3 264.6L795.0 210.4M729.4 265.2L796.1 210.9M730.5 265.8L797.3 211.4M731.7 266.4L798.4 211.9M732.8 267.1L799.5 212.5M734.0 267.7L800.6 213.0M735.1 268.3L801.7 213.5M736.3 268.9L802.9 214.0M737.4 269.5L804.0 214.6M738.6 270.2L805.1 215.1M739.7 270.8L806.2 215.6M740.9 271.4L807.4 216.1M742.1 272.0L808.5 216.7M743.2 272.7L809.6 217.2M744.4 273.3L810.8 217.7M745.5 273.9L811.9 218.3M746.7 274.6L813.0 218.8M747.9 275.2L814.2 219.3M749.1 275.8L815.3 219.9M750.2 276.5L816.5 220.4M751.4 277.1L817.6 220.9M752.6 277.7L818.8 221.5M753.8 278.4L819.9 222.0M755.0 279.0L821.1 222.6M756.2 279.7L822.2 223.1M757.3 280.3L823.4 223.6M758.5 281.0L824.6 224.2M759.7 281.6L825.7 224.7M760.9 282.2L826.9 225.3M762.1 282.9L828.1 225.8M763.3 283.5L829.2 226.4M764.5 284.2L830.4 226.9M765.7 284.9L831.6 227.5M767.0 285.5L832.8 228.0M768.2 286.2L833.9 228.6M769.4 286.8L835.1 229.1M770.6 287.5L836.3 229.7M771.8 288.1L837.5 230.2M773.0 288.8L838.7 230.8M774.3 289.5L839.9 231.3M775.5 290.1L841.1 231.9M776.7 290.8L842.3 232.4M778.0 291.4L843.5 233.0M779.2 292.1L844.7 233.6M780.4 292.8L845.9 234.1M781.7 293.5L847.1 234.7M782.9 294.1L848.3 235.2M784.2 294.8L849.5 235.8M785.4 295.5L850.7 236.4M786.6 296.1L851.9 236.9M787.9 296.8L853.1 237.5M789.2 297.5L854.3 238.1M790.4 298.2L855.6 238.7M791.7 298.9L856.8 239.2M792.9 299.5L858.0 239.8M794.2 300.2L859.2 240.4M795.5 300.9L860.5 240.9M796.7 301.6L861.7 241.5M798.0 302.3L862.9 242.1M799.3 303.0L864.2 242.7M800.6 303.7L865.4 243.2M801.8 304.4L866.6 243.8M803.1 305.1L867.9 244.4M804.4 305.7L869.1 245.0M805.7 306.4L870.4 245.6M807.0 307.1L871.6 246.2M808.3 307.8L872.9 246.7M809.6 308.5L874.1 247.3M810.9 309.2L875.4 247.9M812.2 309.9L876.6 248.5M813.5 310.7L877.9 249.1M814.8 311.4L879.2 249.7M816.1 312.1L880.4 250.3M817.4 312.8L881.7 250.9M818.7 313.5L883.0 251.5M820.1 314.2L884.3 252.1M821.4 314.9L885.5 252.7M822.7 315.6L886.8 253.3M824.0 316.3L888.1 253.8M825.4 317.1L889.4 254.4M826.7 317.8L890.7 255.1M828.0 318.5L892.0 255.7M829.4 319.2L893.2 256.3M830.7 320.0L894.5 256.9M832.1 320.7L895.8 257.5M833.4 321.4L897.1 258.1" stroke="#222" stroke-width="0.33" opacity="0.64" fill="none"/><path d="M726.4 178.3L897.8 258.4M727.3 177.7L898.6 257.6M728.2 177.1L899.4 256.8M729.1 176.5L900.2 255.9M729.9 175.8L901.0 255.1M730.8 175.2L901.8 254.3M731.7 174.6L902.6 253.5M732.5 174.0L903.4 252.7M733.4 173.4L904.2 252.0M734.3 172.8L905.0 251.2M735.1 172.1L905.8 250.4M736.0 171.5L906.6 249.6M736.8 170.9L907.4 248.8M737.7 170.3L908.2 248.0M738.6 169.7L909.0 247.2M739.4 169.1L909.7 246.4M740.3 168.5L910.5 245.7M741.1 167.9L911.3 244.9M742.0 167.3L912.1 244.1M742.8 166.7L912.9 243.3M743.7 166.1L913.7 242.5M744.5 165.5L914.4 241.8M745.3 164.9L915.2 241.0M746.2 164.3L916.0 240.2M747.0 163.7L916.8 239.5M747.9 163.1L917.5 238.7M748.7 162.5L918.3 237.9M749.5 161.9L919.1 237.2M750.4 161.3L919.8 236.4M751.2 160.7L920.6 235.7M752.0 160.1L921.3 234.9M752.8 159.5L922.1 234.1M753.7 158.9L922.9 233.4M754.5 158.3L923.6 232.6M755.3 157.7L924.4 231.9M756.1 157.2L925.1 231.1M756.9 156.6L925.9 230.4M757.8 156.0L926.6 229.6M758.6 155.4L927.4 228.9M759.4 154.8L928.1 228.2M760.2 154.2L928.9 227.4M761.0 153.7L929.6 226.7M761.8 153.1L930.3 225.9M762.6 152.5L931.1 225.2M763.4 151.9L931.8 224.5M764.3 151.4L932.6 223.7M765.1 150.8L933.3 223.0M765.9 150.2L934.0 222.3M766.7 149.6L934.8 221.5M767.5 149.1L935.5 220.8M768.3 148.5L936.2 220.1M769.1 147.9L937.0 219.4M769.8 147.4L937.7 218.6M770.6 146.8L938.4 217.9M771.4 146.2L939.1 217.2M772.2 145.7L939.8 216.5M773.0 145.1L940.6 215.8M773.8 144.6L941.3 215.1M774.6 144.0L942.0 214.3M775.4 143.4L942.7 213.6M776.1 142.9L943.4 212.9M776.9 142.3L944.1 212.2M726.9 178.6L777.6 142.4M727.9 179.0L778.5 142.8M728.9 179.5L779.5 143.2M729.9 180.0L780.5 143.6M730.9 180.4L781.5 144.0M731.9 180.9L782.4 144.4M732.9 181.4L783.4 144.9M733.9 181.8L784.4 145.3M734.9 182.3L785.4 145.7M735.9 182.8L786.4 146.1M736.9 183.2L787.4 146.5M737.9 183.7L788.4 146.9M738.9 184.2L789.4 147.3M739.9 184.6L790.4 147.7M740.9 185.1L791.4 148.2M742.0 185.6L792.3 148.6M743.0 186.1L793.3 149.0M744.0 186.5L794.3 149.4M745.0 187.0L795.3 149.8M746.0 187.5L796.4 150.3M747.1 188.0L797.4 150.7M748.1 188.5L798.4 151.1M749.1 188.9L799.4 151.5M750.1 189.4L800.4 151.9M751.2 189.9L801.4 152.4M752.2 190.4L802.4 152.8M753.2 190.9L803.4 153.2M754.3 191.3L804.4 153.6M755.3 191.8L805.5 154.1M756.4 192.3L806.5 154.5M757.4 192.8L807.5 154.9M758.4 193.3L808.5 155.3M759.5 193.8L809.6 155.8M760.5 194.3L810.6 156.2M761.6 194.8L811.6 156.6M762.6 195.2L812.6 157.1M763.7 195.7L813.7 157.5M764.7 196.2L814.7 157.9M765.8 196.7L815.7 158.4M766.9 197.2L816.8 158.8M767.9 197.7L817.8 159.2M769.0 198.2L818.9 159.7M770.0 198.7L819.9 160.1M771.1 199.2L820.9 160.5M772.2 199.7L822.0 161.0M773.2 200.2L823.0 161.4M774.3 200.7L824.1 161.8M775.4 201.2L825.1 162.3M776.5 201.7L826.2 162.7M777.5 202.2L827.2 163.2M778.6 202.7L828.3 163.6M779.7 203.2L829.4 164.1M780.8 203.7L830.4 164.5M781.9 204.2L831.5 164.9M783.0 204.7L832.5 165.4M784.0 205.2L833.6 165.8M785.1 205.8L834.7 166.3M786.2 206.3L835.8 166.7M787.3 206.8L836.8 167.2M788.4 207.3L837.9 167.6M789.5 207.8L839.0 168.1M790.6 208.3L840.0 168.5M791.7 208.8L841.1 169.0M792.8 209.3L842.2 169.4M793.9 209.9L843.3 169.9M795.0 210.4L844.4 170.3M796.1 210.9L845.5 170.8M797.3 211.4L846.5 171.2M798.4 211.9L847.6 171.7M799.5 212.5L848.7 172.1M800.6 213.0L849.8 172.6M801.7 213.5L850.9 173.1M802.9 214.0L852.0 173.5M804.0 214.6L853.1 174.0M805.1 215.1L854.2 174.4M806.2 215.6L855.3 174.9M807.4 216.1L856.4 175.4M808.5 216.7L857.5 175.8M809.6 217.2L858.6 176.3M810.8 217.7L859.7 176.7M811.9 218.3L860.8 177.2M813.0 218.8L862.0 177.7M814.2 219.3L863.1 178.1M815.3 219.9L864.2 178.6M816.5 220.4L865.3 179.1M817.6 220.9L866.4 179.5M818.8 221.5L867.6 180.0M819.9 222.0L868.7 180.5M821.1 222.6L869.8 181.0M822.2 223.1L870.9 181.4M823.4 223.6L872.1 181.9M824.6 224.2L873.2 182.4M825.7 224.7L874.3 182.8M826.9 225.3L875.5 183.3M828.1 225.8L876.6 183.8M829.2 226.4L877.7 184.3M830.4 226.9L878.9 184.7M831.6 227.5L880.0 185.2M832.8 228.0L881.2 185.7M833.9 228.6L882.3 186.2M835.1 229.1L883.5 186.7M836.3 229.7L884.6 187.1M837.5 230.2L885.8 187.6M838.7 230.8L886.9 188.1M839.9 231.3L888.1 188.6M841.1 231.9L889.3 189.1M842.3 232.4L890.4 189.6M843.5 233.0L891.6 190.1M844.7 233.6L892.8 190.5M845.9 234.1L893.9 191.0M847.1 234.7L895.1 191.5M848.3 235.2L896.3 192.0M849.5 235.8L897.4 192.5M850.7 236.4L898.6 193.0M851.9 236.9L899.8 193.5M853.1 237.5L901.0 194.0M854.3 238.1L902.2 194.5M855.6 238.7L903.3 195.0M856.8 239.2L904.5 195.5M858.0 239.8L905.7 196.0M859.2 240.4L906.9 196.5M860.5 240.9L908.1 197.0M861.7 241.5L909.3 197.5M862.9 242.1L910.5 198.0M864.2 242.7L911.7 198.5M865.4 243.2L912.9 199.0M866.6 243.8L914.1 199.5M867.9 244.4L915.3 200.0M869.1 245.0L916.5 200.5M870.4 245.6L917.7 201.0M871.6 246.2L919.0 201.5M872.9 246.7L920.2 202.0M874.1 247.3L921.4 202.5M875.4 247.9L922.6 203.0M876.6 248.5L923.8 203.5M877.9 249.1L925.0 204.0M879.2 249.7L926.3 204.5M880.4 250.3L927.5 205.1M881.7 250.9L928.7 205.6M883.0 251.5L930.0 206.1M884.3 252.1L931.2 206.6M885.5 252.7L932.4 207.1M886.8 253.3L933.7 207.6M888.1 253.8L934.9 208.2M889.4 254.4L936.2 208.7M890.7 255.1L937.4 209.2M892.0 255.7L938.7 209.7M893.2 256.3L939.9 210.2M894.5 256.9L941.2 210.8M895.8 257.5L942.4 211.3M897.1 258.1L943.7 211.8" stroke="#222" stroke-width="0.27" opacity="0.56" fill="none"/><path d="M777.7 141.8L944.9 211.5M778.5 141.2L945.6 210.8M779.3 140.6L946.3 210.1M780.0 140.1L947.0 209.4M780.8 139.5L947.7 208.7M781.6 139.0L948.4 208.0M782.4 138.4L949.1 207.3M783.1 137.9L949.8 206.6M783.9 137.3L950.5 205.9M784.7 136.8L951.2 205.2M785.4 136.3L951.9 204.5M786.2 135.7L952.6 203.8M787.0 135.2L953.3 203.1M787.7 134.6L954.0 202.5M788.5 134.1L954.6 201.8M789.2 133.5L955.3 201.1M790.0 133.0L956.0 200.4M790.8 132.5L956.7 199.7M791.5 131.9L957.4 199.0M792.3 131.4L958.1 198.4M793.0 130.8L958.8 197.7M793.8 130.3L959.4 197.0M794.5 129.8L960.1 196.3M795.3 129.2L960.8 195.7M796.0 128.7L961.5 195.0M796.8 128.2L962.1 194.3M797.5 127.6L962.8 193.6M798.2 127.1L963.5 193.0M799.0 126.6L964.2 192.3M799.7 126.1L964.8 191.6M800.5 125.5L965.5 191.0M801.2 125.0L966.2 190.3M801.9 124.5L966.8 189.6M802.7 124.0L967.5 189.0M803.4 123.4L968.1 188.3M804.1 122.9L968.8 187.7M804.9 122.4L969.5 187.0M805.6 121.9L970.1 186.4M806.3 121.4L970.8 185.7M807.0 120.8L971.4 185.1M807.8 120.3L972.1 184.4M808.5 119.8L972.7 183.8M809.2 119.3L973.4 183.1M809.9 118.8L974.0 182.5M810.7 118.3L974.7 181.8M811.4 117.7L975.3 181.2M812.1 117.2L976.0 180.5M812.8 116.7L976.6 179.9M813.5 116.2L977.3 179.2M814.2 115.7L977.9 178.6M814.9 115.2L978.6 178.0M815.7 114.7L979.2 177.3M816.4 114.2L979.8 176.7M817.1 113.7L980.5 176.1M817.8 113.2L981.1 175.4M818.5 112.7L981.7 174.8M819.2 112.2L982.4 174.2M819.9 111.7L983.0 173.5M820.6 111.2L983.6 172.9M821.3 110.7L984.3 172.3M822.0 110.2L984.9 171.7M822.7 109.7L985.5 171.0M823.4 109.2L986.1 170.4M824.1 108.7L986.8 169.8M824.8 108.2L987.4 169.2M825.5 107.7L988.0 168.6M826.2 107.2L988.6 167.9M826.9 106.7L989.3 167.3M827.6 106.2L989.9 166.7M828.2 105.7L990.5 166.1M828.9 105.2L991.1 165.5M829.6 104.7L991.7 164.9M830.3 104.2L992.3 164.3M831.0 103.7L993.0 163.6M831.7 103.3L993.6 163.0M832.3 102.8L994.2 162.4M833.0 102.3L994.8 161.8M833.7 101.8L995.4 161.2M834.4 101.3L996.0 160.6M835.1 100.8L996.6 160.0M835.7 100.4L997.2 159.4M836.4 99.9L997.8 158.8M837.1 99.4L998.4 158.2M837.8 98.9L999.0 157.6M838.4 98.4L999.6 157.0M839.1 98.0L1000.2 156.4M839.8 97.5L1000.8 155.8M840.4 97.0L1001.4 155.2M841.1 96.5L1002.0 154.6M841.8 96.1L1002.6 154.1M842.4 95.6L1003.2 153.5M843.1 95.1L1003.8 152.9M843.8 94.6L1004.4 152.3M844.4 94.2L1005.0 151.7M845.1 93.7L1005.5 151.1M845.7 93.2L1006.1 150.5M846.4 92.7L1006.7 150.0M847.1 92.3L1007.3 149.4M847.7 91.8L1007.9 148.8M848.4 91.3L1008.5 148.2M849.0 90.9L1009.0 147.6M777.6 142.4L849.5 91.0M778.5 142.8L850.4 91.4M779.5 143.2L851.4 91.7M780.5 143.6L852.3 92.0M781.5 144.0L853.3 92.4M782.4 144.4L854.2 92.7M783.4 144.9L855.2 93.1M784.4 145.3L856.1 93.4M785.4 145.7L857.1 93.7M786.4 146.1L858.0 94.1M787.4 146.5L859.0 94.4M788.4 146.9L859.9 94.8M789.4 147.3L860.9 95.1M790.4 147.7L861.9 95.4M791.4 148.2L862.8 95.8M792.3 148.6L863.8 96.1M793.3 149.0L864.7 96.5M794.3 149.4L865.7 96.8M795.3 149.8L866.7 97.1M796.4 150.3L867.6 97.5M797.4 150.7L868.6 97.8M798.4 151.1L869.6 98.2M799.4 151.5L870.6 98.5M800.4 151.9L871.5 98.9M801.4 152.4L872.5 99.2M802.4 152.8L873.5 99.6M803.4 153.2L874.5 99.9M804.4 153.6L875.5 100.3M805.5 154.1L876.4 100.6M806.5 154.5L877.4 101.0M807.5 154.9L878.4 101.3M808.5 155.3L879.4 101.7M809.6 155.8L880.4 102.0M810.6 156.2L881.4 102.4M811.6 156.6L882.4 102.7M812.6 157.1L883.4 103.1M813.7 157.5L884.4 103.4M814.7 157.9L885.3 103.8M815.7 158.4L886.3 104.1M816.8 158.8L887.3 104.5M817.8 159.2L888.3 104.8M818.9 159.7L889.3 105.2M819.9 160.1L890.4 105.5M820.9 160.5L891.4 105.9M822.0 161.0L892.4 106.3M823.0 161.4L893.4 106.6M824.1 161.8L894.4 107.0M825.1 162.3L895.4 107.3M826.2 162.7L896.4 107.7M827.2 163.2L897.4 108.0M828.3 163.6L898.4 108.4M829.4 164.1L899.5 108.8M830.4 164.5L900.5 109.1M831.5 164.9L901.5 109.5M832.5 165.4L902.5 109.9M833.6 165.8L903.5 110.2M834.7 166.3L904.6 110.6M835.8 166.7L905.6 110.9M836.8 167.2L906.6 111.3M837.9 167.6L907.6 111.7M839.0 168.1L908.7 112.0M840.0 168.5L909.7 112.4M841.1 169.0L910.7 112.8M842.2 169.4L911.8 113.1M843.3 169.9L912.8 113.5M844.4 170.3L913.9 113.9M845.5 170.8L914.9 114.2M846.5 171.2L915.9 114.6M847.6 171.7L917.0 115.0M848.7 172.1L918.0 115.4M849.8 172.6L919.1 115.7M850.9 173.1L920.1 116.1M852.0 173.5L921.2 116.5M853.1 174.0L922.2 116.9M854.2 174.4L923.3 117.2M855.3 174.9L924.3 117.6M856.4 175.4L925.4 118.0M857.5 175.8L926.5 118.3M858.6 176.3L927.5 118.7M859.7 176.7L928.6 119.1M860.8 177.2L929.6 119.5M862.0 177.7L930.7 119.9M863.1 178.1L931.8 120.2M864.2 178.6L932.8 120.6M865.3 179.1L933.9 121.0M866.4 179.5L935.0 121.4M867.6 180.0L936.1 121.8M868.7 180.5L937.1 122.1M869.8 181.0L938.2 122.5M870.9 181.4L939.3 122.9M872.1 181.9L940.4 123.3M873.2 182.4L941.5 123.7M874.3 182.8L942.5 124.1M875.5 183.3L943.6 124.4M876.6 183.8L944.7 124.8M877.7 184.3L945.8 125.2M878.9 184.7L946.9 125.6M880.0 185.2L948.0 126.0M881.2 185.7L949.1 126.4M882.3 186.2L950.2 126.8M883.5 186.7L951.3 127.2M884.6 187.1L952.4 127.5M885.8 187.6L953.5 127.9M886.9 188.1L954.6 128.3M888.1 188.6L955.7 128.7M889.3 189.1L956.8 129.1M890.4 189.6L957.9 129.5M891.6 190.1L959.0 129.9M892.8 190.5L960.1 130.3M893.9 191.0L961.2 130.7M895.1 191.5L962.4 131.1M896.3 192.0L963.5 131.5M897.4 192.5L964.6 131.9M898.6 193.0L965.7 132.3M899.8 193.5L966.8 132.7M901.0 194.0L968.0 133.1M902.2 194.5L969.1 133.5M903.3 195.0L970.2 133.9M904.5 195.5L971.3 134.3M905.7 196.0L972.5 134.7M906.9 196.5L973.6 135.1M908.1 197.0L974.7 135.5M909.3 197.5L975.9 135.9M910.5 198.0L977.0 136.3M911.7 198.5L978.2 136.7M912.9 199.0L979.3 137.1M914.1 199.5L980.4 137.5M915.3 200.0L981.6 137.9M916.5 200.5L982.7 138.3M917.7 201.0L983.9 138.7M919.0 201.5L985.0 139.1M920.2 202.0L986.2 139.5M921.4 202.5L987.3 139.9M922.6 203.0L988.5 140.4M923.8 203.5L989.7 140.8M925.0 204.0L990.8 141.2M926.3 204.5L992.0 141.6M927.5 205.1L993.2 142.0M928.7 205.6L994.3 142.4M930.0 206.1L995.5 142.8M931.2 206.6L996.7 143.2M932.4 207.1L997.8 143.7M933.7 207.6L999.0 144.1M934.9 208.2L1000.2 144.5M936.2 208.7L1001.4 144.9M937.4 209.2L1002.5 145.3M938.7 209.7L1003.7 145.8M939.9 210.2L1004.9 146.2M941.2 210.8L1006.1 146.6M942.4 211.3L1007.3 147.0M943.7 211.8L1008.5 147.4" stroke="#222" stroke-width="0.22" opacity="0.5" fill="none"/><polygon points="665.0,342.6 665.6,357.5 651.7,369.5 631.2,371.0 616.9,361.2 617.2,346.2 631.2,334.9 650.7,333.5" fill="#000" opacity=".03"/><polygon points="738.9,278.8 740.9,291.3 729.1,301.4 710.3,302.8 696.2,294.6 695.1,282.0 707.0,272.4 724.9,271.1" fill="#000" opacity=".03"/><polygon points="810.9,220.7 813.9,231.2 804.0,239.7 786.8,240.9 773.0,234.1 770.7,223.5 780.7,215.4 797.2,214.2" fill="#000" opacity=".03"/><polygon points="863.1,173.7 866.7,182.8 858.0,190.1 842.1,191.2 828.7,185.4 825.7,176.3 834.5,169.3 849.8,168.2" fill="#000" opacity=".03"/></g><polygon points="634.5,354.7 640.1,350.1 739.8,416.2 734.3,421.7" fill="#4b4b4b" stroke="#0e0e0e" stroke-width=".9"/><polygon points="635.7,353.8 637.6,352.1 737.3,418.7 735.4,420.6" fill="#5c5c5c" opacity=".7"/><polygon points="639.3,240.2 643.5,237.2 725.3,282.8 721.2,286.2" fill="#4b4b4b" stroke="#0e0e0e" stroke-width=".9"/><polygon points="640.1,239.6 641.6,238.5 723.4,284.3 722.0,285.5" fill="#5c5c5c" opacity=".7"/><polygon points="787.9,228.6 791.8,225.4 885.9,270.7 882.3,274.3" fill="#4b4b4b" stroke="#0e0e0e" stroke-width=".9"/><polygon points="788.7,228.0 790.0,226.8 884.3,272.3 883.0,273.6" fill="#5c5c5c" opacity=".7"/><polygon points="769.6,147.2 773.4,144.5 851.2,177.3 847.5,180.3" fill="#4b4b4b" stroke="#0e0e0e" stroke-width=".9"/><polygon points="770.3,146.7 771.7,145.7 849.6,178.6 848.3,179.7" fill="#5c5c5c" opacity=".7"/></g><polygon points="461.0,370.0 642.3,241.8 644.2,242.2 645.6,238.5 772.0,148.5 773.8,149.0 775.3,145.3 826.2,108.7 887.2,129.9 903.4,114.9 934.5,126.9 919.6,141.5 985.6,168.5 881.7,268.5 879.5,269.0 877.7,272.0 733.3,416.4 731.5,417.5 730.0,421.3 637.0,514.3 554.8,453.6 511.0,491.5 476.0,459.5 521.8,421.8" fill="none" stroke="#1a1a1a" stroke-width="1" stroke-linejoin="round"/></svg>
<div style="left:418.00px;top:39.00px;width:1.00px;height:523.00px;background:#cfcfcf;"></div>
<div style="left:1031.00px;top:39.00px;width:1.00px;height:523.00px;background:#d8d8d8;"></div>
<div style="left:1032.00px;top:39.00px;width:3.00px;height:523.00px;background:#f5f5f5;"></div>
<div style="left:418.00px;top:38.30px;width:614.00px;height:1.00px;background:#cfcfcf;"></div>
<div style="left:874.00px;top:48.00px;width:139.60px;height:32.60px;border:1px solid #b9dceb;border-radius:2px;box-sizing:border-box;background:rgba(246,249,250,.5);"></div>
<svg style="left:881.90px;top:56.60px;" width="5.00" height="5.00" viewBox="0 0 5 5"><rect x=".4" y=".4" width="4.2" height="4.2" rx="1.2" fill="#eef" stroke="#3a3ac0" stroke-width=".7"/><path d="M1.2 2.5 L3.8 2.5" stroke="#3a3ac0" stroke-width=".8"/></svg>
<span style="left:889.60px;top:55.51px;font-size:5.22px;line-height:6.79px;color:#5b9cc2;white-space:nowrap;">Scene</span>
<svg style="left:890.50px;top:68.20px;" width="5.00" height="5.00" viewBox="0 0 5 5"><rect x=".4" y=".4" width="4.2" height="4.2" rx="1.2" fill="#eef" stroke="#3a3ac0" stroke-width=".7"/><path d="M1.2 2.5 L3.8 2.5 M2.5 1.2 L2.5 3.8" stroke="#3a3ac0" stroke-width=".7"/></svg>
<svg style="left:899.40px;top:68.40px;" width="6.00" height="4.20" viewBox="0 0 6 4.2"><path d="M0 2.1 Q3 -1.3 6 2.1 Q3 5.5 0 2.1Z" fill="#555"/><circle cx="3" cy="2.1" r="1.1" fill="#ddd"/><circle cx="3" cy="2.1" r=".6" fill="#222"/></svg>
<span style="left:907.70px;top:66.88px;font-size:5.41px;line-height:7.03px;color:#5b9cc2;white-space:nowrap;">Water_Purifier_mesh</span>
<svg style="left:1008.60px;top:75.60px;" width="4.00" height="4.00" viewBox="0 0 4 4"><path d="M4 0 L0 4 M4 2 L2 4" stroke="#777" stroke-width=".6"/></svg>
<div style="left:1018.60px;top:144.40px;width:20.00px;height:57.60px;background:#0f69a0;border:1px solid #fff;border-radius:4.5px 0 0 4.5px;box-sizing:border-box;"></div>
<span style="left:1028px;top:174px;width:0;height:0;overflow:visible;"><span style="position:absolute;display:block;white-space:nowrap;font-weight:bold;color:#fff;font-size:7.65px;line-height:9px;transform:translate(-50%,-50%) rotate(-90deg);">Need help?</span></span>
<svg style="left:440.00px;top:508.00px;" width="42.00" height="36.00" viewBox="0 0 42 36"><path d="M21.4 31.1 L20.3 15.7" stroke="#5050f0" stroke-width="1"/><circle cx="20.3" cy="15.9" r="1.2" fill="#5050f0"/>
<path d="M21.4 31.1 L7.6 24" stroke="#2a9a2a" stroke-width="1"/><circle cx="7.8" cy="24.1" r="1.1" fill="#2a8a2a"/>
<path d="M21.4 31.1 L33.5 21.2" stroke="#e01818" stroke-width="1"/><circle cx="33.2" cy="21.5" r="1.1" fill="#c01010"/>
<text x="14.6" y="12.4" font-family="Liberation Sans, sans-serif" font-size="13.6" font-weight="bold" font-style="italic" fill="#5a5af5">Z</text>
<text x="1.2" y="23.2" font-family="Liberation Sans, sans-serif" font-size="9.6" font-style="italic" font-weight="bold" fill="#2a962a">Y</text>
<text x="33.2" y="20.8" font-family="Liberation Sans, sans-serif" font-size="9.6" font-style="italic" font-weight="bold" fill="#e01818">X</text></svg>
</body></html>
